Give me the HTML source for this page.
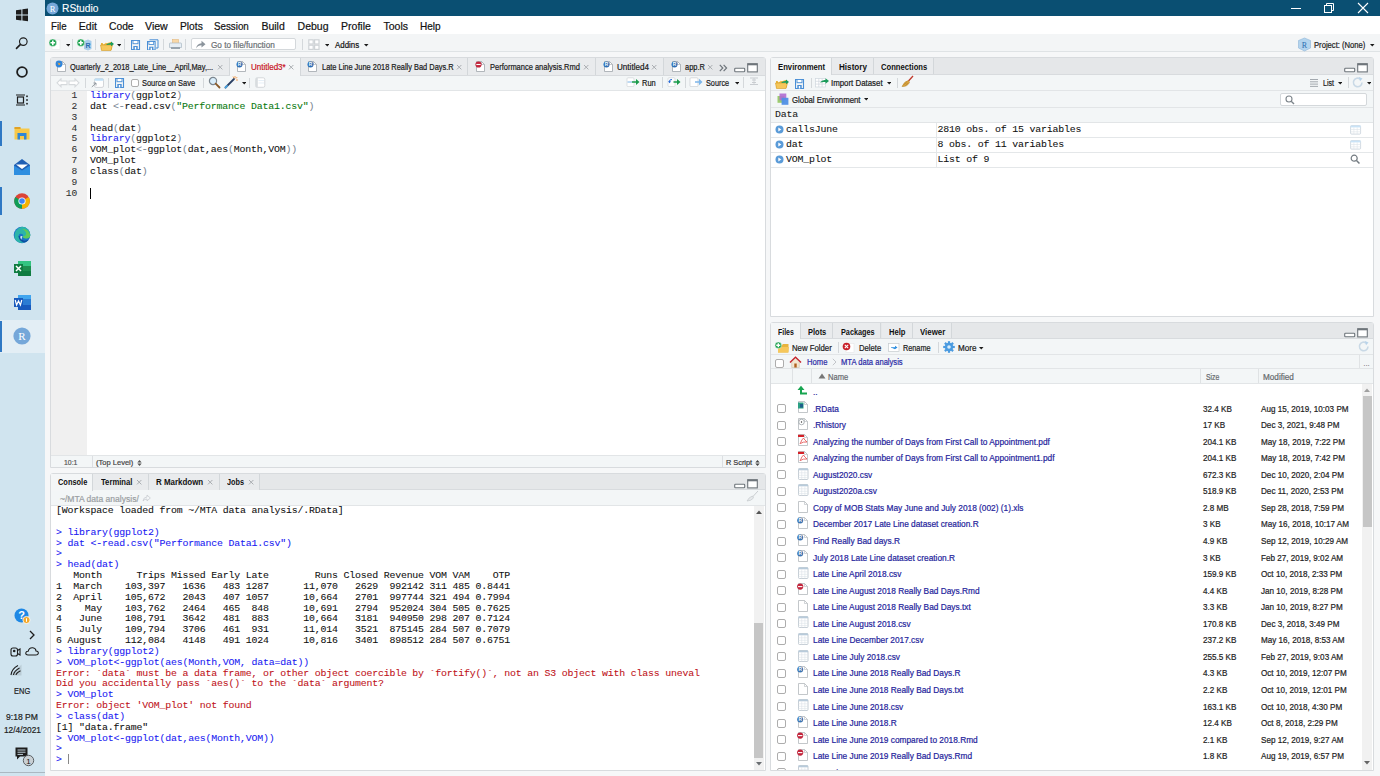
<!DOCTYPE html><html><head><meta charset="utf-8"><style>
html,body{margin:0;padding:0;width:1380px;height:776px;overflow:hidden;background:#f6f7f8;}
body>div,body>svg{position:absolute;}
body{font-family:"Liberation Sans",sans-serif;}
</style></head><body>
<div style="left:44px;top:0px;width:1336px;height:776px;background:#f6f7f8;"></div>
<div style="left:44px;top:0px;width:1336px;height:16px;background:#0a4f72;"></div>
<div style="left:44px;top:16px;width:1336px;height:18px;background:#ffffff;"></div>
<div style="left:44px;top:34px;width:1336px;height:17px;background:#f3f5f6;"></div>
<div style="left:44px;top:51px;width:1336px;height:1px;background:#dfe3e5;"></div>
<div style="left:0px;top:0px;width:45px;height:776px;background:#d0e4ef;"></div>
<div style="left:0px;top:320px;width:45px;height:33px;background:#e3eef5;"></div>
<div style="left:0px;top:772px;width:45px;height:1px;background:#aab8c2;"></div>
<div style="left:50px;top:57px;width:716px;height:411px;background:#ffffff;border:1px solid #d8dbde;box-sizing:border-box;border-radius:3px 3px 0 0;"></div>
<div style="left:51px;top:58px;width:714px;height:17px;background:#e5e7e9;"></div>
<div style="left:51px;top:75px;width:714px;height:1px;background:#d8dbde;"></div>
<div style="left:51px;top:76px;width:714px;height:14px;background:#f3f6f7;"></div>
<div style="left:51px;top:90px;width:714px;height:1px;background:#e2e5e7;"></div>
<div style="left:51px;top:91px;width:36px;height:364px;background:#f0f0f0;"></div>
<div style="left:51px;top:455px;width:714px;height:1px;background:#e2e5e7;"></div>
<div style="left:51px;top:456px;width:714px;height:11px;background:#f3f6f7;"></div>
<div style="left:50px;top:473px;width:716px;height:298px;background:#ffffff;border:1px solid #d8dbde;box-sizing:border-box;border-radius:3px 3px 0 0;"></div>
<div style="left:51px;top:474px;width:714px;height:16px;background:#e5e7e9;"></div>
<div style="left:51px;top:489px;width:714px;height:1px;background:#d8dbde;"></div>
<div style="left:51px;top:490px;width:714px;height:15px;background:#f3f6f7;"></div>
<div style="left:51px;top:505px;width:714px;height:1px;background:#e2e5e7;"></div>
<div style="left:770px;top:57px;width:604px;height:260px;background:#ffffff;border:1px solid #d8dbde;box-sizing:border-box;border-radius:3px 3px 0 0;"></div>
<div style="left:771px;top:58px;width:602px;height:16px;background:#e5e7e9;"></div>
<div style="left:771px;top:74px;width:602px;height:1px;background:#d8dbde;"></div>
<div style="left:771px;top:75px;width:602px;height:15px;background:#f3f6f7;"></div>
<div style="left:771px;top:90px;width:602px;height:1px;background:#e2e5e7;"></div>
<div style="left:771px;top:91px;width:602px;height:16px;background:#f3f6f7;"></div>
<div style="left:771px;top:107px;width:602px;height:1px;background:#e2e5e7;"></div>
<div style="left:771px;top:108px;width:602px;height:14px;background:#f3f6f7;"></div>
<div style="left:771px;top:122px;width:602px;height:1px;background:#e2e5e7;"></div>
<div style="left:770px;top:322px;width:604px;height:449px;background:#ffffff;border:1px solid #d8dbde;box-sizing:border-box;border-radius:3px 3px 0 0;"></div>
<div style="left:771px;top:323px;width:602px;height:15px;background:#e5e7e9;"></div>
<div style="left:771px;top:338px;width:602px;height:1px;background:#d8dbde;"></div>
<div style="left:771px;top:339px;width:602px;height:15px;background:#f3f6f7;"></div>
<div style="left:771px;top:354px;width:602px;height:1px;background:#e2e5e7;"></div>
<div style="left:771px;top:355px;width:602px;height:13px;background:#f3f6f7;"></div>
<div style="left:771px;top:368px;width:602px;height:1px;background:#e2e5e7;"></div>
<div style="left:771px;top:369px;width:602px;height:14px;background:#f3f6f7;"></div>
<div style="left:771px;top:383px;width:602px;height:1px;background:#e2e5e7;"></div>
<div style="left:61.80px;top:-1.00px;line-height:20px;font-size:10.2px;color:#ffffff;font-family:'Liberation Sans',sans-serif;white-space:pre;transform-origin:0 0;transform:scaleX(1.0057);-webkit-text-stroke:0.1px #ffffff;">RStudio</div>
<div style="left:50.90px;top:16.00px;line-height:20px;font-size:10.5px;color:#111111;font-family:'Liberation Sans',sans-serif;white-space:pre;transform-origin:0 0;transform:scaleX(0.9222);-webkit-text-stroke:0.2px #111111;">File</div>
<div style="left:78.80px;top:16.00px;line-height:20px;font-size:10.5px;color:#111111;font-family:'Liberation Sans',sans-serif;white-space:pre;transform-origin:0 0;-webkit-text-stroke:0.2px #111111;">Edit</div>
<div style="left:108.50px;top:16.00px;line-height:20px;font-size:10.5px;color:#111111;font-family:'Liberation Sans',sans-serif;white-space:pre;transform-origin:0 0;transform:scaleX(0.9799);-webkit-text-stroke:0.2px #111111;">Code</div>
<div style="left:145.10px;top:16.00px;line-height:20px;font-size:10.5px;color:#111111;font-family:'Liberation Sans',sans-serif;white-space:pre;transform-origin:0 0;transform:scaleX(1.0090);-webkit-text-stroke:0.2px #111111;">View</div>
<div style="left:179.90px;top:16.00px;line-height:20px;font-size:10.5px;color:#111111;font-family:'Liberation Sans',sans-serif;white-space:pre;transform-origin:0 0;transform:scaleX(0.9768);-webkit-text-stroke:0.2px #111111;">Plots</div>
<div style="left:214.40px;top:16.00px;line-height:20px;font-size:10.5px;color:#111111;font-family:'Liberation Sans',sans-serif;white-space:pre;transform-origin:0 0;transform:scaleX(0.9315);-webkit-text-stroke:0.2px #111111;">Session</div>
<div style="left:261.40px;top:16.00px;line-height:20px;font-size:10.5px;color:#111111;font-family:'Liberation Sans',sans-serif;white-space:pre;transform-origin:0 0;-webkit-text-stroke:0.2px #111111;">Build</div>
<div style="left:297.60px;top:16.00px;line-height:20px;font-size:10.5px;color:#111111;font-family:'Liberation Sans',sans-serif;white-space:pre;transform-origin:0 0;-webkit-text-stroke:0.2px #111111;">Debug</div>
<div style="left:341.10px;top:16.00px;line-height:20px;font-size:10.5px;color:#111111;font-family:'Liberation Sans',sans-serif;white-space:pre;transform-origin:0 0;-webkit-text-stroke:0.2px #111111;">Profile</div>
<div style="left:383.50px;top:16.00px;line-height:20px;font-size:10.5px;color:#111111;font-family:'Liberation Sans',sans-serif;white-space:pre;transform-origin:0 0;-webkit-text-stroke:0.2px #111111;">Tools</div>
<div style="left:419.90px;top:16.00px;line-height:20px;font-size:10.5px;color:#111111;font-family:'Liberation Sans',sans-serif;white-space:pre;transform-origin:0 0;transform:scaleX(0.9538);-webkit-text-stroke:0.2px #111111;">Help</div>
<div style="left:190.5px;top:38.3px;width:105px;height:12px;background:#ffffff;border:1px solid #d4d8db;box-sizing:border-box;border-radius:2px;"></div>
<div style="left:211.30px;top:35.00px;line-height:20px;font-size:8.3px;color:#6a6f73;font-family:'Liberation Sans',sans-serif;white-space:pre;transform-origin:0 0;transform:scaleX(0.9878);-webkit-text-stroke:0.2px #6a6f73;">Go to file/function</div>
<div style="left:335.00px;top:35.00px;line-height:20px;font-size:8.3px;color:#111;font-family:'Liberation Sans',sans-serif;white-space:pre;transform-origin:0 0;transform:scaleX(0.9495);-webkit-text-stroke:0.2px #111;">Addins</div>
<div style="left:1314.30px;top:35.00px;line-height:20px;font-size:8.3px;color:#222;font-family:'Liberation Sans',sans-serif;white-space:pre;transform-origin:0 0;transform:scaleX(0.9209);-webkit-text-stroke:0.2px #222;">Project: (None)</div>
<div style="left:51px;top:58px;width:178.5px;height:17px;background:#e9ebed;border-right:1px solid #d3d7da;box-sizing:border-box;"></div>
<div style="left:229.5px;top:58px;width:71.5px;height:18px;background:#f4f6f7;border-right:1px solid #d3d7da;box-sizing:border-box;"></div>
<div style="left:301px;top:58px;width:167.2px;height:17px;background:#e9ebed;border-right:1px solid #d3d7da;box-sizing:border-box;"></div>
<div style="left:468.2px;top:58px;width:127.80000000000001px;height:17px;background:#e9ebed;border-right:1px solid #d3d7da;box-sizing:border-box;"></div>
<div style="left:596px;top:58px;width:68.29999999999995px;height:17px;background:#e9ebed;border-right:1px solid #d3d7da;box-sizing:border-box;"></div>
<div style="left:70.30px;top:57.00px;line-height:20px;font-size:8.3px;color:#1a1a1a;font-family:'Liberation Sans',sans-serif;white-space:pre;transform-origin:0 0;transform:scaleX(0.8952);-webkit-text-stroke:0.2px #1a1a1a;">Quarterly_2_2018_Late_Line__April,May,...</div>
<svg style="position:absolute;left:216.60000000000002px;top:63.599999999999994px;" width="6.4" height="6.4" viewBox="0 0 6.4 6.4"><path d="M1 1 L5.4 5.4 M5.4 1 L1 5.4" stroke="#a9adb1" stroke-width="1.0"/></svg>
<div style="left:250.50px;top:57.00px;line-height:20px;font-size:8.3px;color:#c8141e;font-family:'Liberation Sans',sans-serif;white-space:pre;transform-origin:0 0;transform:scaleX(0.9642);-webkit-text-stroke:0.2px #c8141e;">Untitled3*</div>
<svg style="position:absolute;left:288.1px;top:63.599999999999994px;" width="6.4" height="6.4" viewBox="0 0 6.4 6.4"><path d="M1 1 L5.4 5.4 M5.4 1 L1 5.4" stroke="#a9adb1" stroke-width="1.0"/></svg>
<div style="left:321.50px;top:57.00px;line-height:20px;font-size:8.3px;color:#1a1a1a;font-family:'Liberation Sans',sans-serif;white-space:pre;transform-origin:0 0;transform:scaleX(0.8948);-webkit-text-stroke:0.2px #1a1a1a;">Late Line June 2018 Really Bad Days.R</div>
<svg style="position:absolute;left:455.7px;top:63.599999999999994px;" width="6.4" height="6.4" viewBox="0 0 6.4 6.4"><path d="M1 1 L5.4 5.4 M5.4 1 L1 5.4" stroke="#a9adb1" stroke-width="1.0"/></svg>
<div style="left:489.80px;top:57.00px;line-height:20px;font-size:8.3px;color:#1a1a1a;font-family:'Liberation Sans',sans-serif;white-space:pre;transform-origin:0 0;transform:scaleX(0.9023);-webkit-text-stroke:0.2px #1a1a1a;">Performance analysis.Rmd</div>
<svg style="position:absolute;left:583.0px;top:63.599999999999994px;" width="6.4" height="6.4" viewBox="0 0 6.4 6.4"><path d="M1 1 L5.4 5.4 M5.4 1 L1 5.4" stroke="#a9adb1" stroke-width="1.0"/></svg>
<div style="left:616.70px;top:57.00px;line-height:20px;font-size:8.3px;color:#1a1a1a;font-family:'Liberation Sans',sans-serif;white-space:pre;transform-origin:0 0;transform:scaleX(0.9768);-webkit-text-stroke:0.2px #1a1a1a;">Untitled4</div>
<svg style="position:absolute;left:650.9px;top:63.599999999999994px;" width="6.4" height="6.4" viewBox="0 0 6.4 6.4"><path d="M1 1 L5.4 5.4 M5.4 1 L1 5.4" stroke="#a9adb1" stroke-width="1.0"/></svg>
<div style="left:684.90px;top:57.00px;line-height:20px;font-size:8.3px;color:#1a1a1a;font-family:'Liberation Sans',sans-serif;white-space:pre;transform-origin:0 0;transform:scaleX(0.8941);-webkit-text-stroke:0.2px #1a1a1a;">app.R</div>
<svg style="position:absolute;left:707.4px;top:63.599999999999994px;" width="6.4" height="6.4" viewBox="0 0 6.4 6.4"><path d="M1 1 L5.4 5.4 M5.4 1 L1 5.4" stroke="#a9adb1" stroke-width="1.0"/></svg>
<div style="left:51px;top:474px;width:42.3px;height:17px;background:#f4f6f7;border-right:1px solid #d3d7da;box-sizing:border-box;"></div>
<div style="left:93.3px;top:474px;width:55.8px;height:15.5px;background:#e9ebed;border-right:1px solid #d3d7da;box-sizing:border-box;"></div>
<div style="left:149.1px;top:474px;width:71.30000000000001px;height:15.5px;background:#e9ebed;border-right:1px solid #d3d7da;box-sizing:border-box;"></div>
<div style="left:220.4px;top:474px;width:39.99999999999997px;height:15.5px;background:#e9ebed;border-right:1px solid #d3d7da;box-sizing:border-box;"></div>
<div style="left:57.80px;top:473.00px;line-height:20px;font-size:8.2px;color:#111;font-family:'Liberation Sans',sans-serif;white-space:pre;transform-origin:0 0;transform:scaleX(0.9057);font-weight:bold;">Console</div>
<div style="left:100.90px;top:473.00px;line-height:20px;font-size:8.2px;color:#111;font-family:'Liberation Sans',sans-serif;white-space:pre;transform-origin:0 0;transform:scaleX(0.9383);font-weight:bold;">Terminal</div>
<svg style="position:absolute;left:135.8px;top:479.1px;" width="6.4" height="6.4" viewBox="0 0 6.4 6.4"><path d="M1 1 L5.4 5.4 M5.4 1 L1 5.4" stroke="#a9adb1" stroke-width="1.0"/></svg>
<div style="left:155.70px;top:473.00px;line-height:20px;font-size:8.2px;color:#111;font-family:'Liberation Sans',sans-serif;white-space:pre;transform-origin:0 0;transform:scaleX(0.9703);font-weight:bold;">R Markdown</div>
<svg style="position:absolute;left:206.8px;top:479.1px;" width="6.4" height="6.4" viewBox="0 0 6.4 6.4"><path d="M1 1 L5.4 5.4 M5.4 1 L1 5.4" stroke="#a9adb1" stroke-width="1.0"/></svg>
<div style="left:227.00px;top:473.00px;line-height:20px;font-size:8.2px;color:#111;font-family:'Liberation Sans',sans-serif;white-space:pre;transform-origin:0 0;transform:scaleX(0.8882);font-weight:bold;">Jobs</div>
<svg style="position:absolute;left:247.5px;top:479.1px;" width="6.4" height="6.4" viewBox="0 0 6.4 6.4"><path d="M1 1 L5.4 5.4 M5.4 1 L1 5.4" stroke="#a9adb1" stroke-width="1.0"/></svg>
<div style="left:771px;top:58px;width:61px;height:17px;background:#f4f6f7;border-right:1px solid #d3d7da;box-sizing:border-box;"></div>
<div style="left:832px;top:58px;width:41.799999999999955px;height:16px;background:#e9ebed;border-right:1px solid #d3d7da;box-sizing:border-box;"></div>
<div style="left:873.8px;top:58px;width:60.200000000000045px;height:16px;background:#e9ebed;border-right:1px solid #d3d7da;box-sizing:border-box;"></div>
<div style="left:778.10px;top:58.00px;line-height:20px;font-size:8.2px;color:#111;font-family:'Liberation Sans',sans-serif;white-space:pre;transform-origin:0 0;transform:scaleX(0.9418);font-weight:bold;">Environment</div>
<div style="left:839.00px;top:58.00px;line-height:20px;font-size:8.2px;color:#111;font-family:'Liberation Sans',sans-serif;white-space:pre;transform-origin:0 0;transform:scaleX(0.9912);font-weight:bold;">History</div>
<div style="left:880.70px;top:58.00px;line-height:20px;font-size:8.2px;color:#111;font-family:'Liberation Sans',sans-serif;white-space:pre;transform-origin:0 0;transform:scaleX(0.9324);font-weight:bold;">Connections</div>
<div style="left:771px;top:323px;width:30px;height:16px;background:#f4f6f7;border-right:1px solid #d3d7da;box-sizing:border-box;"></div>
<div style="left:801px;top:323px;width:32.299999999999955px;height:15px;background:#e9ebed;border-right:1px solid #d3d7da;box-sizing:border-box;"></div>
<div style="left:833.3px;top:323px;width:48.200000000000045px;height:15px;background:#e9ebed;border-right:1px solid #d3d7da;box-sizing:border-box;"></div>
<div style="left:881.5px;top:323px;width:31.700000000000045px;height:15px;background:#e9ebed;border-right:1px solid #d3d7da;box-sizing:border-box;"></div>
<div style="left:913.2px;top:323px;width:38.5px;height:15px;background:#e9ebed;border-right:1px solid #d3d7da;box-sizing:border-box;"></div>
<div style="left:778.20px;top:323.00px;line-height:20px;font-size:8.2px;color:#111;font-family:'Liberation Sans',sans-serif;white-space:pre;transform-origin:0 0;transform:scaleX(0.8455);font-weight:bold;">Files</div>
<div style="left:808.10px;top:323.00px;line-height:20px;font-size:8.2px;color:#111;font-family:'Liberation Sans',sans-serif;white-space:pre;transform-origin:0 0;transform:scaleX(0.9128);font-weight:bold;">Plots</div>
<div style="left:840.60px;top:323.00px;line-height:20px;font-size:8.2px;color:#111;font-family:'Liberation Sans',sans-serif;white-space:pre;transform-origin:0 0;transform:scaleX(0.8879);font-weight:bold;">Packages</div>
<div style="left:888.80px;top:323.00px;line-height:20px;font-size:8.2px;color:#111;font-family:'Liberation Sans',sans-serif;white-space:pre;transform-origin:0 0;transform:scaleX(0.9286);font-weight:bold;">Help</div>
<div style="left:920.00px;top:323.00px;line-height:20px;font-size:8.2px;color:#111;font-family:'Liberation Sans',sans-serif;white-space:pre;transform-origin:0 0;transform:scaleX(0.9624);font-weight:bold;">Viewer</div>
<div style="left:141.90px;top:73.00px;line-height:20px;font-size:8.3px;color:#1a1a1a;font-family:'Liberation Sans',sans-serif;white-space:pre;transform-origin:0 0;transform:scaleX(0.8990);-webkit-text-stroke:0.2px #1a1a1a;">Source on Save</div>
<div style="left:642.10px;top:73.00px;line-height:20px;font-size:8.3px;color:#1a1a1a;font-family:'Liberation Sans',sans-serif;white-space:pre;transform-origin:0 0;transform:scaleX(0.9000);-webkit-text-stroke:0.2px #1a1a1a;">Run</div>
<div style="left:705.80px;top:73.00px;line-height:20px;font-size:8.3px;color:#1a1a1a;font-family:'Liberation Sans',sans-serif;white-space:pre;transform-origin:0 0;transform:scaleX(0.8785);-webkit-text-stroke:0.2px #1a1a1a;">Source</div>
<div style="left:64.00px;top:453.00px;line-height:20px;font-size:7.8px;color:#555;font-family:'Liberation Sans',sans-serif;white-space:pre;transform-origin:0 0;transform:scaleX(0.8828);-webkit-text-stroke:0.2px #555;">10:1</div>
<div style="left:91.5px;top:456px;width:1px;height:11px;background:#dcdfe2;"></div>
<div style="left:95.50px;top:453.00px;line-height:20px;font-size:7.8px;color:#444;font-family:'Liberation Sans',sans-serif;white-space:pre;transform-origin:0 0;transform:scaleX(0.9667);-webkit-text-stroke:0.2px #444;">(Top Level)</div>
<div style="left:721.5px;top:456px;width:1px;height:11px;background:#dcdfe2;"></div>
<div style="left:725.80px;top:453.00px;line-height:20px;font-size:7.8px;color:#333;font-family:'Liberation Sans',sans-serif;white-space:pre;transform-origin:0 0;transform:scaleX(0.9410);-webkit-text-stroke:0.2px #333;">R Script</div>
<svg style="position:absolute;left:136.5px;top:459.7px;" width="5" height="6" viewBox="0 0 5 6"><path d="M0.3 2.4 L2.5 0 L4.7 2.4Z M0.3 3.6 L2.5 6 L4.7 3.6Z" fill="#555"/></svg>
<svg style="position:absolute;left:755.4px;top:459.7px;" width="5" height="6" viewBox="0 0 5 6"><path d="M0.3 2.4 L2.5 0 L4.7 2.4Z M0.3 3.6 L2.5 6 L4.7 3.6Z" fill="#444"/></svg>
<div style="top:90.00px;line-height:12px;font-size:9.6px;color:#333;font-family:'Liberation Mono',monospace;white-space:pre;letter-spacing:0.002px;-webkit-text-stroke:0.08px #333;right:1302.7px;">1</div>
<div style="left:90px;top:90.00px;line-height:12px;font-size:9.9px;letter-spacing:-0.178px;-webkit-text-stroke:0.08px currentColor;font-family:'Liberation Mono',monospace;white-space:pre;"><span style="color:#1f1ff0">library</span><span style="color:#7a8693">(</span><span style="color:#111">ggplot2</span><span style="color:#7a8693">)</span></div>
<div style="top:100.84px;line-height:12px;font-size:9.6px;color:#333;font-family:'Liberation Mono',monospace;white-space:pre;letter-spacing:0.002px;-webkit-text-stroke:0.08px #333;right:1302.7px;">2</div>
<div style="left:90px;top:100.84px;line-height:12px;font-size:9.9px;letter-spacing:-0.178px;-webkit-text-stroke:0.08px currentColor;font-family:'Liberation Mono',monospace;white-space:pre;"><span style="color:#111">dat </span><span style="color:#7a8693">&lt;-</span><span style="color:#111">read.csv</span><span style="color:#7a8693">(</span><span style="color:#0a7a10">"Performance Data1.csv"</span><span style="color:#7a8693">)</span></div>
<div style="top:111.68px;line-height:12px;font-size:9.6px;color:#333;font-family:'Liberation Mono',monospace;white-space:pre;letter-spacing:0.002px;-webkit-text-stroke:0.08px #333;right:1302.7px;">3</div>
<div style="top:122.52px;line-height:12px;font-size:9.6px;color:#333;font-family:'Liberation Mono',monospace;white-space:pre;letter-spacing:0.002px;-webkit-text-stroke:0.08px #333;right:1302.7px;">4</div>
<div style="left:90px;top:122.52px;line-height:12px;font-size:9.9px;letter-spacing:-0.178px;-webkit-text-stroke:0.08px currentColor;font-family:'Liberation Mono',monospace;white-space:pre;"><span style="color:#111">head</span><span style="color:#7a8693">(</span><span style="color:#111">dat</span><span style="color:#7a8693">)</span></div>
<div style="top:133.36px;line-height:12px;font-size:9.6px;color:#333;font-family:'Liberation Mono',monospace;white-space:pre;letter-spacing:0.002px;-webkit-text-stroke:0.08px #333;right:1302.7px;">5</div>
<div style="left:90px;top:133.36px;line-height:12px;font-size:9.9px;letter-spacing:-0.178px;-webkit-text-stroke:0.08px currentColor;font-family:'Liberation Mono',monospace;white-space:pre;"><span style="color:#1f1ff0">library</span><span style="color:#7a8693">(</span><span style="color:#111">ggplot2</span><span style="color:#7a8693">)</span></div>
<div style="top:144.20px;line-height:12px;font-size:9.6px;color:#333;font-family:'Liberation Mono',monospace;white-space:pre;letter-spacing:0.002px;-webkit-text-stroke:0.08px #333;right:1302.7px;">6</div>
<div style="left:90px;top:144.20px;line-height:12px;font-size:9.9px;letter-spacing:-0.178px;-webkit-text-stroke:0.08px currentColor;font-family:'Liberation Mono',monospace;white-space:pre;"><span style="color:#111">VOM_plot</span><span style="color:#7a8693">&lt;-</span><span style="color:#111">ggplot</span><span style="color:#7a8693">(</span><span style="color:#111">dat,aes</span><span style="color:#7a8693">(</span><span style="color:#111">Month,VOM</span><span style="color:#7a8693">))</span></div>
<div style="top:155.04px;line-height:12px;font-size:9.6px;color:#333;font-family:'Liberation Mono',monospace;white-space:pre;letter-spacing:0.002px;-webkit-text-stroke:0.08px #333;right:1302.7px;">7</div>
<div style="left:90px;top:155.04px;line-height:12px;font-size:9.9px;letter-spacing:-0.178px;-webkit-text-stroke:0.08px currentColor;font-family:'Liberation Mono',monospace;white-space:pre;"><span style="color:#111">VOM_plot</span></div>
<div style="top:165.88px;line-height:12px;font-size:9.6px;color:#333;font-family:'Liberation Mono',monospace;white-space:pre;letter-spacing:0.002px;-webkit-text-stroke:0.08px #333;right:1302.7px;">8</div>
<div style="left:90px;top:165.88px;line-height:12px;font-size:9.9px;letter-spacing:-0.178px;-webkit-text-stroke:0.08px currentColor;font-family:'Liberation Mono',monospace;white-space:pre;"><span style="color:#111">class</span><span style="color:#7a8693">(</span><span style="color:#111">dat</span><span style="color:#7a8693">)</span></div>
<div style="top:176.72px;line-height:12px;font-size:9.6px;color:#333;font-family:'Liberation Mono',monospace;white-space:pre;letter-spacing:0.002px;-webkit-text-stroke:0.08px #333;right:1302.7px;">9</div>
<div style="top:187.56px;line-height:12px;font-size:9.6px;color:#333;font-family:'Liberation Mono',monospace;white-space:pre;letter-spacing:0.002px;-webkit-text-stroke:0.08px #333;right:1302.7px;">10</div>
<div style="left:90px;top:188px;width:1px;height:11px;background:#000;"></div>
<div style="left:60.00px;top:489.00px;line-height:20px;font-size:8.4px;color:#9a9ea2;font-family:'Liberation Sans',sans-serif;white-space:pre;transform-origin:0 0;transform:scaleX(1.0183);-webkit-text-stroke:0.2px #9a9ea2;">~/MTA data analysis/</div>
<div style="top:505.00px;line-height:12px;font-size:9.9px;color:#111;font-family:'Liberation Mono',monospace;white-space:pre;letter-spacing:-0.178px;-webkit-text-stroke:0.08px #111;left:56px;">[Workspace loaded from ~/MTA data analysis/.RData]</div>
<div style="top:526.68px;line-height:12px;font-size:9.9px;color:#1a1af2;font-family:'Liberation Mono',monospace;white-space:pre;letter-spacing:-0.178px;-webkit-text-stroke:0.08px #1a1af2;left:56px;">&gt; library(ggplot2)</div>
<div style="top:537.52px;line-height:12px;font-size:9.9px;color:#1a1af2;font-family:'Liberation Mono',monospace;white-space:pre;letter-spacing:-0.178px;-webkit-text-stroke:0.08px #1a1af2;left:56px;">&gt; dat &lt;-read.csv("Performance Data1.csv")</div>
<div style="top:548.36px;line-height:12px;font-size:9.9px;color:#1a1af2;font-family:'Liberation Mono',monospace;white-space:pre;letter-spacing:-0.178px;-webkit-text-stroke:0.08px #1a1af2;left:56px;">&gt; </div>
<div style="top:559.20px;line-height:12px;font-size:9.9px;color:#1a1af2;font-family:'Liberation Mono',monospace;white-space:pre;letter-spacing:-0.178px;-webkit-text-stroke:0.08px #1a1af2;left:56px;">&gt; head(dat)</div>
<div style="top:570.04px;line-height:12px;font-size:9.9px;color:#111;font-family:'Liberation Mono',monospace;white-space:pre;letter-spacing:-0.178px;-webkit-text-stroke:0.08px #111;left:56px;">   Month      Trips Missed Early Late        Runs Closed Revenue VOM VAM    OTP</div>
<div style="top:580.88px;line-height:12px;font-size:9.9px;color:#111;font-family:'Liberation Mono',monospace;white-space:pre;letter-spacing:-0.178px;-webkit-text-stroke:0.08px #111;left:56px;">1  March    103,397   1636   483 1287      11,070   2629  992142 311 485 0.8441</div>
<div style="top:591.72px;line-height:12px;font-size:9.9px;color:#111;font-family:'Liberation Mono',monospace;white-space:pre;letter-spacing:-0.178px;-webkit-text-stroke:0.08px #111;left:56px;">2  April    105,672   2043   407 1057      10,664   2701  997744 321 494 0.7994</div>
<div style="top:602.56px;line-height:12px;font-size:9.9px;color:#111;font-family:'Liberation Mono',monospace;white-space:pre;letter-spacing:-0.178px;-webkit-text-stroke:0.08px #111;left:56px;">3    May    103,762   2464   465  848      10,691   2794  952024 304 505 0.7625</div>
<div style="top:613.40px;line-height:12px;font-size:9.9px;color:#111;font-family:'Liberation Mono',monospace;white-space:pre;letter-spacing:-0.178px;-webkit-text-stroke:0.08px #111;left:56px;">4   June    108,791   3642   481  883      10,664   3181  940950 298 207 0.7124</div>
<div style="top:624.24px;line-height:12px;font-size:9.9px;color:#111;font-family:'Liberation Mono',monospace;white-space:pre;letter-spacing:-0.178px;-webkit-text-stroke:0.08px #111;left:56px;">5   July    109,794   3706   461  931      11,014   3521  875145 284 507 0.7079</div>
<div style="top:635.08px;line-height:12px;font-size:9.9px;color:#111;font-family:'Liberation Mono',monospace;white-space:pre;letter-spacing:-0.178px;-webkit-text-stroke:0.08px #111;left:56px;">6 August    112,084   4148   491 1024      10,816   3401  898512 284 507 0.6751</div>
<div style="top:645.92px;line-height:12px;font-size:9.9px;color:#1a1af2;font-family:'Liberation Mono',monospace;white-space:pre;letter-spacing:-0.178px;-webkit-text-stroke:0.08px #1a1af2;left:56px;">&gt; library(ggplot2)</div>
<div style="top:656.76px;line-height:12px;font-size:9.9px;color:#1a1af2;font-family:'Liberation Mono',monospace;white-space:pre;letter-spacing:-0.178px;-webkit-text-stroke:0.08px #1a1af2;left:56px;">&gt; VOM_plot&lt;-ggplot(aes(Month,VOM, data=dat))</div>
<div style="top:667.60px;line-height:12px;font-size:9.9px;color:#c0131b;font-family:'Liberation Mono',monospace;white-space:pre;letter-spacing:-0.178px;-webkit-text-stroke:0.08px #c0131b;left:56px;">Error: `data` must be a data frame, or other object coercible by `fortify()`, not an S3 object with class uneval</div>
<div style="top:678.44px;line-height:12px;font-size:9.9px;color:#c0131b;font-family:'Liberation Mono',monospace;white-space:pre;letter-spacing:-0.178px;-webkit-text-stroke:0.08px #c0131b;left:56px;">Did you accidentally pass `aes()` to the `data` argument?</div>
<div style="top:689.28px;line-height:12px;font-size:9.9px;color:#1a1af2;font-family:'Liberation Mono',monospace;white-space:pre;letter-spacing:-0.178px;-webkit-text-stroke:0.08px #1a1af2;left:56px;">&gt; VOM_plot</div>
<div style="top:700.12px;line-height:12px;font-size:9.9px;color:#c0131b;font-family:'Liberation Mono',monospace;white-space:pre;letter-spacing:-0.178px;-webkit-text-stroke:0.08px #c0131b;left:56px;">Error: object 'VOM_plot' not found</div>
<div style="top:710.96px;line-height:12px;font-size:9.9px;color:#1a1af2;font-family:'Liberation Mono',monospace;white-space:pre;letter-spacing:-0.178px;-webkit-text-stroke:0.08px #1a1af2;left:56px;">&gt; class(dat)</div>
<div style="top:721.80px;line-height:12px;font-size:9.9px;color:#111;font-family:'Liberation Mono',monospace;white-space:pre;letter-spacing:-0.178px;-webkit-text-stroke:0.08px #111;left:56px;">[1] "data.frame"</div>
<div style="top:732.64px;line-height:12px;font-size:9.9px;color:#1a1af2;font-family:'Liberation Mono',monospace;white-space:pre;letter-spacing:-0.178px;-webkit-text-stroke:0.08px #1a1af2;left:56px;">&gt; VOM_plot&lt;-ggplot(dat,aes(Month,VOM))</div>
<div style="top:743.48px;line-height:12px;font-size:9.9px;color:#1a1af2;font-family:'Liberation Mono',monospace;white-space:pre;letter-spacing:-0.178px;-webkit-text-stroke:0.08px #1a1af2;left:56px;">&gt; </div>
<div style="top:754.32px;line-height:12px;font-size:9.9px;color:#1a1af2;font-family:'Liberation Mono',monospace;white-space:pre;letter-spacing:-0.178px;-webkit-text-stroke:0.08px #1a1af2;left:56px;">&gt; </div>
<div style="left:68px;top:754px;width:1px;height:10px;background:#888;"></div>
<div style="left:831.40px;top:73.00px;line-height:20px;font-size:8.3px;color:#1a1a1a;font-family:'Liberation Sans',sans-serif;white-space:pre;transform-origin:0 0;transform:scaleX(0.9480);-webkit-text-stroke:0.2px #1a1a1a;">Import Dataset</div>
<div style="left:791.70px;top:90.00px;line-height:20px;font-size:8.3px;color:#1a1a1a;font-family:'Liberation Sans',sans-serif;white-space:pre;transform-origin:0 0;transform:scaleX(0.9398);-webkit-text-stroke:0.2px #1a1a1a;">Global Environment</div>
<div style="left:1323.20px;top:73.00px;line-height:20px;font-size:8.3px;color:#1a1a1a;font-family:'Liberation Sans',sans-serif;white-space:pre;transform-origin:0 0;transform:scaleX(0.8517);-webkit-text-stroke:0.2px #1a1a1a;">List</div>
<div style="left:1280px;top:93.2px;width:87.3px;height:12.6px;background:#ffffff;border:1px solid #d4d8db;box-sizing:border-box;border-radius:2px;"></div>
<div style="top:108.50px;line-height:12px;font-size:9.9px;color:#222;font-family:'Liberation Mono',monospace;white-space:pre;letter-spacing:-0.178px;-webkit-text-stroke:0.08px #222;left:775px;">Data</div>
<div style="top:123.80px;line-height:12px;font-size:9.9px;color:#111;font-family:'Liberation Mono',monospace;white-space:pre;letter-spacing:-0.178px;-webkit-text-stroke:0.08px #111;left:786px;">callsJune</div>
<div style="top:123.80px;line-height:12px;font-size:9.9px;color:#111;font-family:'Liberation Mono',monospace;white-space:pre;letter-spacing:-0.178px;-webkit-text-stroke:0.08px #111;left:937.5px;">2810 obs. of 15 variables</div>
<div style="left:771px;top:137.45px;width:602px;height:1px;background:#e4e7e9;"></div>
<div style="top:138.75px;line-height:12px;font-size:9.9px;color:#111;font-family:'Liberation Mono',monospace;white-space:pre;letter-spacing:-0.178px;-webkit-text-stroke:0.08px #111;left:786px;">dat</div>
<div style="top:138.75px;line-height:12px;font-size:9.9px;color:#111;font-family:'Liberation Mono',monospace;white-space:pre;letter-spacing:-0.178px;-webkit-text-stroke:0.08px #111;left:937.5px;">8 obs. of 11 variables</div>
<div style="left:771px;top:152.4px;width:602px;height:1px;background:#e4e7e9;"></div>
<div style="top:153.70px;line-height:12px;font-size:9.9px;color:#111;font-family:'Liberation Mono',monospace;white-space:pre;letter-spacing:-0.178px;-webkit-text-stroke:0.08px #111;left:786px;">VOM_plot</div>
<div style="top:153.70px;line-height:12px;font-size:9.9px;color:#111;font-family:'Liberation Mono',monospace;white-space:pre;letter-spacing:-0.178px;-webkit-text-stroke:0.08px #111;left:937.5px;">List of 9</div>
<div style="left:771px;top:167.35px;width:602px;height:1px;background:#e4e7e9;"></div>
<div style="left:936px;top:123px;width:1px;height:45px;background:#e4e7e9;"></div>
<div style="left:791.90px;top:338.00px;line-height:20px;font-size:8.3px;color:#1a1a1a;font-family:'Liberation Sans',sans-serif;white-space:pre;transform-origin:0 0;transform:scaleX(0.9378);-webkit-text-stroke:0.2px #1a1a1a;">New Folder</div>
<div style="left:858.60px;top:338.00px;line-height:20px;font-size:8.3px;color:#1a1a1a;font-family:'Liberation Sans',sans-serif;white-space:pre;transform-origin:0 0;transform:scaleX(0.9252);-webkit-text-stroke:0.2px #1a1a1a;">Delete</div>
<div style="left:903.30px;top:338.00px;line-height:20px;font-size:8.3px;color:#1a1a1a;font-family:'Liberation Sans',sans-serif;white-space:pre;transform-origin:0 0;transform:scaleX(0.8765);-webkit-text-stroke:0.2px #1a1a1a;">Rename</div>
<div style="left:958.30px;top:338.00px;line-height:20px;font-size:8.3px;color:#1a1a1a;font-family:'Liberation Sans',sans-serif;white-space:pre;transform-origin:0 0;transform:scaleX(0.9732);-webkit-text-stroke:0.2px #1a1a1a;">More</div>
<div style="left:806.90px;top:352.00px;line-height:20px;font-size:8.3px;color:#2b2ba6;font-family:'Liberation Sans',sans-serif;white-space:pre;transform-origin:0 0;transform:scaleX(0.9212);-webkit-text-stroke:0.2px #2b2ba6;">Home</div>
<svg style="position:absolute;left:831.5px;top:358px;" width="5" height="8" viewBox="0 0 5 8"><path d="M0.8 0.8 L4 4 L0.8 7.2" fill="none" stroke="#b5b9bd" stroke-width="0.8"/></svg>
<div style="left:840.80px;top:352.00px;line-height:20px;font-size:8.3px;color:#2b2ba6;font-family:'Liberation Sans',sans-serif;white-space:pre;transform-origin:0 0;transform:scaleX(0.9182);-webkit-text-stroke:0.2px #2b2ba6;">MTA data analysis</div>
<div style="left:828.40px;top:367.00px;line-height:20px;font-size:8.3px;color:#666a6e;font-family:'Liberation Sans',sans-serif;white-space:pre;transform-origin:0 0;transform:scaleX(0.9122);-webkit-text-stroke:0.2px #666a6e;">Name</div>
<div style="left:1205.80px;top:367.00px;line-height:20px;font-size:8.3px;color:#666a6e;font-family:'Liberation Sans',sans-serif;white-space:pre;transform-origin:0 0;transform:scaleX(0.8301);-webkit-text-stroke:0.2px #666a6e;">Size</div>
<div style="left:1263.10px;top:367.00px;line-height:20px;font-size:8.3px;color:#666a6e;font-family:'Liberation Sans',sans-serif;white-space:pre;transform-origin:0 0;transform:scaleX(0.9849);-webkit-text-stroke:0.2px #666a6e;">Modified</div>
<div style="left:0px;top:121px;width:2px;height:25px;background:#2f78c4;"></div>
<div style="left:0px;top:187px;width:2px;height:28px;background:#2f78c4;"></div>
<div style="left:0px;top:321px;width:2px;height:31px;background:#2f78c4;"></div>
<svg style="position:absolute;left:15px;top:7.5px;" width="14" height="14" viewBox="0 0 14 14"><g fill="#1d1d1d"><path d="M1 2.2 L6.4 1.5 V6.4 H1Z"/><path d="M7.4 1.35 L13 0.6 V6.4 H7.4Z"/><path d="M1 7.4 H6.4 V12.4 L1 11.7Z"/><path d="M7.4 7.4 H13 V13.3 L7.4 12.5Z"/></g></svg>
<svg style="position:absolute;left:15px;top:36px;" width="14" height="14" viewBox="0 0 14 14"><circle cx="8.3" cy="5.6" r="3.8" fill="none" stroke="#1d1d1d" stroke-width="1.15"/><path d="M5.5 8.4 L1.5 12.4" stroke="#1d1d1d" stroke-width="1.6" stroke-linecap="round"/></svg>
<svg style="position:absolute;left:15px;top:65px;" width="14" height="14" viewBox="0 0 14 14"><circle cx="7" cy="7" r="4.9" fill="none" stroke="#1d1d1d" stroke-width="1.8"/></svg>
<svg style="position:absolute;left:15px;top:93px;" width="14" height="14" viewBox="0 0 14 14"><g fill="none" stroke="#1d1d1d" stroke-width="1.2"><path d="M1 2 H10 M1 12 H10"/><rect x="2.5" y="4" width="6" height="6"/></g><g fill="#1d1d1d"><rect x="11.2" y="2.5" width="1.6" height="1.6"/><rect x="11.2" y="6.2" width="1.6" height="1.6"/><rect x="11.2" y="9.9" width="1.6" height="1.6"/></g></svg>
<svg style="position:absolute;left:14px;top:126px;" width="16" height="15" viewBox="0 0 16 15"><path d="M0.5 1.5 H6 L7 2.5 H15.5 V13.5 H0.5Z" fill="#f8c94a"/><rect x="0.5" y="1" width="6" height="2" fill="#e0a227"/><path d="M3.5 7 H12.5 V13.5 H10 V10 H6 V13.5 H3.5Z" fill="#2f86d6"/></svg>
<svg style="position:absolute;left:13px;top:158px;" width="18" height="18" viewBox="0 0 18 18"><path d="M1 7 L9 1 L17 7 V17 H1Z" fill="#1f5fb4"/><path d="M3 6.5 H15 L9 11Z" fill="#ffffff"/><path d="M1 7.5 L9 12.5 L17 7.5 V17 H1Z" fill="#2e8ee0"/></svg>
<svg style="position:absolute;left:14px;top:193px;" width="16" height="16" viewBox="0 0 16 16"><circle cx="8" cy="8" r="7.8" fill="#db4437"/><path d="M8 8 L1.25 4.1 A7.8 7.8 0 0 0 8 15.8 Z" fill="#0f9d58"/><path d="M8 8 L14.75 4.1 A7.8 7.8 0 0 1 8 15.8 Z" fill="#f4b400"/><circle cx="8" cy="8" r="3.6" fill="#fff"/><circle cx="8" cy="8" r="2.8" fill="#4285f4"/></svg>
<svg style="position:absolute;left:13px;top:226px;" width="18" height="18" viewBox="0 0 18 18"><circle cx="9" cy="9" r="8.3" fill="#1a73c8"/><path d="M9 0.7 A8.3 8.3 0 0 1 17.3 9 Q17 12.5 13 12.5 Q10 12.5 9.5 10.5 Q11 9 9 8 Q6 7 5.5 10 Q6 15 11 16.5 Q4 18 1.5 12 Q0.7 3 9 0.7Z" fill="#2cb4a9"/><path d="M17.3 9 Q17 12.5 13 12.5 Q10 12.5 9.5 10.5 Q12 11 13 8.5 Q13.5 5 9 3 Q15 2 17.3 9Z" fill="#5ec95a"/><path d="M5.5 10 Q6 15 11 16.5 Q14 16 16 13.5 Q12 15.5 9.5 14 Q7.2 12.5 7.8 10.5Z" fill="#0c4f9e"/><path d="M9.5 10.5 Q8 12.3 9 13.8 Q7 13 7.2 10.8 Q8 9.2 9.5 10.5Z" fill="#fff" opacity="0.85"/></svg>
<svg style="position:absolute;left:13px;top:260px;" width="19" height="17" viewBox="0 0 19 17"><rect x="5" y="1" width="13" height="15" fill="#1d8f4e"/><rect x="5" y="1" width="13" height="5" fill="#33c481"/><rect x="5" y="11" width="13" height="5" fill="#107c41"/><rect x="1" y="4" width="9" height="9" fill="#107c41"/><path d="M3 6 L8 11 M8 6 L3 11" stroke="#fff" stroke-width="1.5"/></svg>
<svg style="position:absolute;left:13px;top:294px;" width="19" height="17" viewBox="0 0 19 17"><rect x="5" y="1" width="13" height="15" fill="#2b7cd3"/><rect x="5" y="1" width="13" height="4" fill="#41a5ee"/><rect x="5" y="11" width="13" height="5" fill="#185abd"/><rect x="1" y="4" width="9" height="9" fill="#185abd"/><path d="M2.2 6 L3.6 11 L5.5 7 L7.4 11 L8.8 6" stroke="#fff" stroke-width="1.2" fill="none"/></svg>
<svg style="position:absolute;left:13px;top:327px;" width="18" height="18" viewBox="0 0 18 18"><circle cx="9" cy="9" r="8.6" fill="#75a7d9"/><text x="9" y="12.8" font-family="Liberation Serif" font-size="11" fill="#fff" text-anchor="middle">R</text></svg>
<svg style="position:absolute;left:14px;top:608px;" width="17" height="17" viewBox="0 0 17 17"><circle cx="7.5" cy="7.5" r="7" fill="#1e88e5"/><circle cx="7.5" cy="7.5" r="5.6" fill="#fff" opacity="0"/><text x="7.5" y="11.3" font-family="Liberation Sans" font-weight="bold" font-size="11" fill="#fff" text-anchor="middle">?</text><circle cx="12.5" cy="12" r="3.6" fill="#f2a92c" stroke="#fff" stroke-width="0.8"/><rect x="12" y="10.3" width="1" height="3.5" fill="#fff"/></svg>
<svg style="position:absolute;left:28px;top:630px;" width="8" height="10" viewBox="0 0 8 10"><path d="M2 1 L6 5 L2 9" fill="none" stroke="#1d1d1d" stroke-width="1.3"/></svg>
<svg style="position:absolute;left:10px;top:645px;" width="11" height="13" viewBox="0 0 11 13"><rect x="1" y="3" width="6.5" height="8" rx="2" fill="none" stroke="#1d1d1d" stroke-width="1.1"/><path d="M7.5 5.5 L10 4 V10 L7.5 8.5" fill="none" stroke="#1d1d1d" stroke-width="1.1"/><circle cx="4.2" cy="6" r="1.3" fill="#1d1d1d"/></svg>
<svg style="position:absolute;left:25px;top:646px;" width="14" height="10" viewBox="0 0 14 10"><path d="M3 9 Q0.5 9 0.8 6.8 Q1.2 5 3.2 5.2 Q4 1.5 7.8 1.8 Q10.8 2.2 11 5 Q13.5 5.2 13.3 7.3 Q13 9 11 9Z" fill="none" stroke="#1d1d1d" stroke-width="1.1"/></svg>
<svg style="position:absolute;left:9px;top:663px;" width="14" height="13" viewBox="0 0 14 13"><g fill="none" stroke="#1d1d1d" stroke-width="1.1"><path d="M2 12 Q2.5 6 9 2.5"/><path d="M4.5 12 Q5 8 10.5 5"/><path d="M7 12 Q7.3 10 11.5 7.8"/></g><path d="M1.5 12.5 L12.5 1.5 L12.5 12.5Z" fill="#1d1d1d" opacity="0.12"/></svg>
<div style="left:13.90px;top:681.00px;line-height:20px;font-size:8.8px;color:#1d1d1d;font-family:'Liberation Sans',sans-serif;white-space:pre;transform-origin:0 0;transform:scaleX(0.8495);-webkit-text-stroke:0.2px #1d1d1d;">ENG</div>
<div style="left:6.20px;top:707.00px;line-height:20px;font-size:8.8px;color:#1d1d1d;font-family:'Liberation Sans',sans-serif;white-space:pre;transform-origin:0 0;transform:scaleX(0.9765);-webkit-text-stroke:0.2px #1d1d1d;">9:18 PM</div>
<div style="left:3.50px;top:720.00px;line-height:20px;font-size:8.8px;color:#1d1d1d;font-family:'Liberation Sans',sans-serif;white-space:pre;transform-origin:0 0;transform:scaleX(0.9451);-webkit-text-stroke:0.2px #1d1d1d;">12/4/2021</div>
<svg style="position:absolute;left:14px;top:746px;" width="22" height="22" viewBox="0 0 22 22"><path d="M1.5 1.5 H13.5 V10.5 H6 L3 13.5 V10.5 H1.5Z" fill="#1d1d1d"/><path d="M3.5 4 H11.5 M3.5 6.2 H11.5 M3.5 8.4 H9" stroke="#d0e4ef" stroke-width="0.9"/><circle cx="14.5" cy="14.5" r="5.2" fill="#c9d0d5" stroke="#5a5f63" stroke-width="1"/><text x="14.5" y="17.6" font-family="Liberation Sans" font-size="8" fill="#111" text-anchor="middle">1</text></svg>
<svg style="position:absolute;left:46px;top:2px;" width="13" height="13" viewBox="0 0 13 13"><circle cx="6.5" cy="6.5" r="6" fill="#75a7d9"/><text x="6.5" y="9.6" font-family="Liberation Serif" font-size="8.5" fill="#fff" text-anchor="middle">R</text></svg>
<svg style="position:absolute;left:1290px;top:2px;" width="12" height="12" viewBox="0 0 12 12"><path d="M1 6.5 H11" stroke="#fff" stroke-width="1"/></svg>
<svg style="position:absolute;left:1322px;top:1px;" width="14" height="14" viewBox="0 0 14 14"><g fill="none" stroke="#fff" stroke-width="1"><rect x="2.5" y="4.5" width="7" height="7"/><path d="M4.5 4.5 V2.5 H11.5 V9.5 H9.5"/></g></svg>
<svg style="position:absolute;left:1356px;top:1px;" width="14" height="14" viewBox="0 0 14 14"><path d="M2 2 L12 12 M12 2 L2 12" stroke="#fff" stroke-width="1.1"/></svg>
<svg style="position:absolute;left:51px;top:39px;" width="10" height="11" viewBox="0 0 10 11"><rect x="1" y="1" width="8" height="9.5" fill="#fff" stroke="#e3e6e8" stroke-width="0.6"/></svg>
<svg style="position:absolute;left:47.6px;top:38.2px;" width="9.6" height="9.6" viewBox="0 0 9.6 9.6"><circle cx="4.8" cy="4.8" r="3.8" fill="#18a04c" stroke="#fff" stroke-width="0.5"/><path d="M4.8 2.444 V7.156 M2.444 4.8 H7.156" stroke="#fff" stroke-width="1.60"/></svg>
<svg style="position:absolute;left:65.55px;top:43.55px;" width="4.5" height="3" viewBox="0 0 4.5 3"><path d="M0 0 H4.5 L2.25 2.6Z" fill="#1a1a1a"/></svg>
<div style="left:72px;top:39px;width:1px;height:11px;background:#d4d8db;"></div>
<svg style="position:absolute;left:83px;top:39px;" width="9" height="12" viewBox="0 0 9 12"><path d="M1 2 L5 0.5 L8.5 2 V10 L5 11.5 L1 10Z" fill="#a9cdea"/><text x="5" y="9" font-family="Liberation Sans" font-size="7" font-weight="bold" fill="#2b6cb0" text-anchor="middle">R</text></svg>
<svg style="position:absolute;left:76.2px;top:38.2px;" width="9.6" height="9.6" viewBox="0 0 9.6 9.6"><circle cx="4.8" cy="4.8" r="3.8" fill="#18a04c" stroke="#fff" stroke-width="0.5"/><path d="M4.8 2.444 V7.156 M2.444 4.8 H7.156" stroke="#fff" stroke-width="1.60"/></svg>
<div style="left:95px;top:39px;width:1px;height:11px;background:#d4d8db;"></div>
<svg style="position:absolute;left:100px;top:39.5px;" width="15" height="11" viewBox="0 0 15 11"><path d="M1 3 H5 L6 2 H12 V9.5 H1Z" fill="#e8b43d"/><path d="M3 4 Q7 1 11 4" fill="none" stroke="#fff" stroke-width="1.2"/><path d="M0.5 5 H12.5 L11 10.5 H1.5Z" fill="#f6c75a" stroke="#d29a26" stroke-width="0.6"/><path d="M6 5 Q8 2.5 11 3 V1.5 L14 4 L11 6.3 V4.8 Q8 4.6 6 5Z" fill="#1a9b5a"/></svg>
<svg style="position:absolute;left:116.55px;top:43.55px;" width="4.5" height="3" viewBox="0 0 4.5 3"><path d="M0 0 H4.5 L2.25 2.6Z" fill="#1a1a1a"/></svg>
<div style="left:124px;top:39px;width:1px;height:11px;background:#d4d8db;"></div>
<svg style="position:absolute;left:131px;top:40.4px;" width="10" height="10" viewBox="0 0 10 10"><g transform="scale(1.0)"><path d="M0.5 0.5 H8.5 V9.5 H0.5Z" fill="none" stroke="#4a8fd6" stroke-width="1.1"/><rect x="2" y="0.5" width="5" height="3.2" fill="#fff" stroke="#4a8fd6" stroke-width="0.9"/><rect x="2.3" y="6" width="4.4" height="3.5" fill="#4a8fd6"/><rect x="3.8" y="7" width="1.4" height="2.5" fill="#fff"/></g></svg>
<svg style="position:absolute;left:146px;top:39px;" width="13" height="12" viewBox="0 0 13 12"><g fill="none" stroke="#4a8fd6" stroke-width="1"><path d="M3.5 0.8 H12 V9 H10"/></g></svg>
<svg style="position:absolute;left:147.3px;top:40.8px;" width="9.6" height="9.6" viewBox="0 0 9.6 9.6"><g transform="scale(0.9555555555555555)"><path d="M0.5 0.5 H8.5 V9.5 H0.5Z" fill="none" stroke="#4a8fd6" stroke-width="1.1"/><rect x="2" y="0.5" width="5" height="3.2" fill="#fff" stroke="#4a8fd6" stroke-width="0.9"/><rect x="2.3" y="6" width="4.4" height="3.5" fill="#4a8fd6"/><rect x="3.8" y="7" width="1.4" height="2.5" fill="#fff"/></g></svg>
<div style="left:163px;top:39px;width:1px;height:11px;background:#d4d8db;"></div>
<svg style="position:absolute;left:169px;top:39px;" width="13" height="11" viewBox="0 0 13 11"><rect x="3.5" y="0.5" width="6" height="4" fill="#f8d7a6" stroke="#e0b070" stroke-width="0.5"/><path d="M1 4 H12 Q12.5 4 12.5 5 V8.5 H0.5 V5 Q0.5 4 1 4Z" fill="#e6eef5" stroke="#a9b7c3" stroke-width="0.7"/><rect x="2" y="8" width="9" height="2" fill="#98a4ae"/></svg>
<div style="left:185px;top:39px;width:1px;height:11px;background:#d4d8db;"></div>
<svg style="position:absolute;left:195px;top:40px;" width="11" height="9" viewBox="0 0 11 9"><path d="M1 8.5 Q2 3.5 6.5 3.2 V0.8 L10.5 4.2 L6.5 7.6 V5.3 Q3 5.3 1 8.5Z" fill="#8b949c"/></svg>
<div style="left:302px;top:39px;width:1px;height:11px;background:#d4d8db;"></div>
<svg style="position:absolute;left:308px;top:39px;" width="12" height="11" viewBox="0 0 12 11"><g fill="#fff" stroke="#cfd3d6" stroke-width="1.2"><rect x="0.8" y="0.8" width="4.4" height="4.2"/><rect x="6.6" y="0.8" width="4.4" height="4.2"/><rect x="0.8" y="6.2" width="4.4" height="4.2"/><rect x="6.6" y="6.2" width="4.4" height="4.2"/></g></svg>
<svg style="position:absolute;left:324.65px;top:43.55px;" width="4.5" height="3" viewBox="0 0 4.5 3"><path d="M0 0 H4.5 L2.25 2.6Z" fill="#1a1a1a"/></svg>
<svg style="position:absolute;left:364.05px;top:43.55px;" width="4.5" height="3" viewBox="0 0 4.5 3"><path d="M0 0 H4.5 L2.25 2.6Z" fill="#1a1a1a"/></svg>
<svg style="position:absolute;left:1297px;top:37px;" width="15" height="15" viewBox="0 0 15 15"><path d="M7.5 1 L13.5 3.5 V11 L7.5 14 L1.5 11 V3.5Z" fill="#b3d4ee" stroke="#8fb6d8" stroke-width="0.6"/><text x="7.5" y="10.5" font-family="Liberation Serif" font-size="8" fill="#2b6cb0" text-anchor="middle">R</text></svg>
<svg style="position:absolute;left:1370.25px;top:43.75px;" width="4.5" height="3" viewBox="0 0 4.5 3"><path d="M0 0 H4.5 L2.25 2.6Z" fill="#1a1a1a"/></svg>
<svg style="position:absolute;left:57px;top:61px;" width="9" height="11" viewBox="0 0 9 11"><path d="M0.5 0.5 H5.5 L8.5 3.5 V10.5 H0.5Z" fill="#fff" stroke="#a0a6ac" stroke-width="0.8"/><path d="M5.5 0.5 V3.5 H8.5" fill="none" stroke="#a0a6ac" stroke-width="0.6"/></svg>
<svg style="position:absolute;left:55px;top:60px;" width="8" height="8" viewBox="0 0 8 8"><circle cx="4" cy="4" r="3.4" fill="#2e86de"/><path d="M2 2.5 Q4 3 3.5 5 Q5 5.5 5.5 3.5" fill="#f0a030"/></svg>
<svg style="position:absolute;left:237px;top:61px;" width="9" height="11" viewBox="0 0 9 11"><path d="M0.5 0.5 H5.5 L8.5 3.5 V10.5 H0.5Z" fill="#fff" stroke="#a0a6ac" stroke-width="0.8"/><path d="M5.5 0.5 V3.5 H8.5" fill="none" stroke="#a0a6ac" stroke-width="0.6"/></svg>
<svg style="position:absolute;left:236px;top:61px;" width="7" height="7" viewBox="0 0 7 7"><circle cx="3.5" cy="3.5" r="3" fill="#2d6fb5"/><text x="3.5" y="5.3" font-family="Liberation Sans" font-size="4.8" font-weight="bold" fill="#fff" text-anchor="middle">R</text></svg>
<svg style="position:absolute;left:308px;top:61px;" width="9" height="11" viewBox="0 0 9 11"><path d="M0.5 0.5 H5.5 L8.5 3.5 V10.5 H0.5Z" fill="#fff" stroke="#a0a6ac" stroke-width="0.8"/><path d="M5.5 0.5 V3.5 H8.5" fill="none" stroke="#a0a6ac" stroke-width="0.6"/></svg>
<svg style="position:absolute;left:307px;top:61px;" width="7" height="7" viewBox="0 0 7 7"><circle cx="3.5" cy="3.5" r="3" fill="#2d6fb5"/><text x="3.5" y="5.3" font-family="Liberation Sans" font-size="4.8" font-weight="bold" fill="#fff" text-anchor="middle">R</text></svg>
<svg style="position:absolute;left:476px;top:61px;" width="9" height="11" viewBox="0 0 9 11"><path d="M0.5 0.5 H5.5 L8.5 3.5 V10.5 H0.5Z" fill="#fff" stroke="#a0a6ac" stroke-width="0.8"/><path d="M5.5 0.5 V3.5 H8.5" fill="none" stroke="#a0a6ac" stroke-width="0.6"/></svg>
<svg style="position:absolute;left:475px;top:61px;" width="7" height="7" viewBox="0 0 7 7"><circle cx="3.5" cy="3.5" r="3.1" fill="#c2253c"/><path d="M1.3 3.5 H5.7" stroke="#fff" stroke-width="1.1"/></svg>
<svg style="position:absolute;left:604px;top:61px;" width="9" height="11" viewBox="0 0 9 11"><path d="M0.5 0.5 H5.5 L8.5 3.5 V10.5 H0.5Z" fill="#fff" stroke="#a0a6ac" stroke-width="0.8"/><path d="M5.5 0.5 V3.5 H8.5" fill="none" stroke="#a0a6ac" stroke-width="0.6"/></svg>
<svg style="position:absolute;left:603px;top:61px;" width="7" height="7" viewBox="0 0 7 7"><circle cx="3.5" cy="3.5" r="3" fill="#2d6fb5"/><text x="3.5" y="5.3" font-family="Liberation Sans" font-size="4.8" font-weight="bold" fill="#fff" text-anchor="middle">R</text></svg>
<svg style="position:absolute;left:672px;top:61px;" width="9" height="11" viewBox="0 0 9 11"><path d="M0.5 0.5 H5.5 L8.5 3.5 V10.5 H0.5Z" fill="#fff" stroke="#a0a6ac" stroke-width="0.8"/><path d="M5.5 0.5 V3.5 H8.5" fill="none" stroke="#a0a6ac" stroke-width="0.6"/></svg>
<svg style="position:absolute;left:671px;top:61px;" width="7" height="7" viewBox="0 0 7 7"><circle cx="3.5" cy="3.5" r="3" fill="#2d6fb5"/><text x="3.5" y="5.3" font-family="Liberation Sans" font-size="4.8" font-weight="bold" fill="#fff" text-anchor="middle">R</text></svg>
<svg style="position:absolute;left:719px;top:63.5px;" width="9" height="8" viewBox="0 0 9 8"><path d="M0.8 0.8 L3.8 4 L0.8 7.2 M4.6 0.8 L7.6 4 L4.6 7.2" fill="none" stroke="#6e757b" stroke-width="1.2"/></svg>
<svg style="position:absolute;left:734px;top:63px;" width="24" height="10" viewBox="0 0 24 10"><rect x="0.7" y="5.2" width="10" height="3.6" rx="0.8" fill="#fff" stroke="#6e757b" stroke-width="1.1"/><rect x="13.7" y="0.7" width="9.6" height="8.2" fill="#fff" stroke="#6e757b" stroke-width="1.1"/><rect x="13.7" y="0.7" width="9.6" height="1.6" fill="#6e757b"/></svg>
<svg style="position:absolute;left:1343.5px;top:63px;" width="24" height="10" viewBox="0 0 24 10"><rect x="0.7" y="5.2" width="10" height="3.6" rx="0.8" fill="#fff" stroke="#6e757b" stroke-width="1.1"/><rect x="13.7" y="0.7" width="9.6" height="8.2" fill="#fff" stroke="#6e757b" stroke-width="1.1"/><rect x="13.7" y="0.7" width="9.6" height="1.6" fill="#6e757b"/></svg>
<svg style="position:absolute;left:734px;top:479px;" width="24" height="10" viewBox="0 0 24 10"><rect x="0.7" y="5.2" width="10" height="3.6" rx="0.8" fill="#fff" stroke="#6e757b" stroke-width="1.1"/><rect x="13.7" y="0.7" width="9.6" height="8.2" fill="#fff" stroke="#6e757b" stroke-width="1.1"/><rect x="13.7" y="0.7" width="9.6" height="1.6" fill="#6e757b"/></svg>
<svg style="position:absolute;left:1343.5px;top:328px;" width="24" height="10" viewBox="0 0 24 10"><rect x="0.7" y="5.2" width="10" height="3.6" rx="0.8" fill="#fff" stroke="#6e757b" stroke-width="1.1"/><rect x="13.7" y="0.7" width="9.6" height="8.2" fill="#fff" stroke="#6e757b" stroke-width="1.1"/><rect x="13.7" y="0.7" width="9.6" height="1.6" fill="#6e757b"/></svg>
<svg style="position:absolute;left:56px;top:78px;" width="25" height="10" viewBox="0 0 25 10"><g fill="#fff" stroke="#d5d9dc" stroke-width="1.1"><path d="M1 4.8 L5 0.8 V3 H11 V6.6 H5 V8.8Z"/><path d="M23 4.8 L19 0.8 V3 H13 V6.6 H19 V8.8Z"/></g></svg>
<div style="left:85px;top:78px;width:1px;height:10px;background:#d4d8db;"></div>
<svg style="position:absolute;left:91px;top:78px;" width="13" height="10" viewBox="0 0 13 10"><rect x="3.5" y="0.6" width="9" height="8.8" rx="1.5" fill="#fff" stroke="#c8ccd0" stroke-width="0.8"/><rect x="3.5" y="0.6" width="9" height="2.2" rx="1" fill="#bfe0f7"/><path d="M0.8 9 L5 5 M2.5 5 H5 V7.5" fill="none" stroke="#8a9299" stroke-width="0.9"/></svg>
<div style="left:108px;top:78px;width:1px;height:10px;background:#d4d8db;"></div>
<svg style="position:absolute;left:115px;top:78px;" width="10" height="10" viewBox="0 0 10 10"><g transform="scale(1.0)"><path d="M0.5 0.5 H8.5 V9.5 H0.5Z" fill="none" stroke="#4a8fd6" stroke-width="1.1"/><rect x="2" y="0.5" width="5" height="3.2" fill="#fff" stroke="#4a8fd6" stroke-width="0.9"/><rect x="2.3" y="6" width="4.4" height="3.5" fill="#4a8fd6"/><rect x="3.8" y="7" width="1.4" height="2.5" fill="#fff"/></g></svg>
<div style="left:130.5px;top:78.5px;width:8.5px;height:8.5px;background:#fff;border:1px solid #adadad;box-sizing:border-box;border-radius:2px;"></div>
<div style="left:202.5px;top:78px;width:1px;height:10px;background:#d4d8db;"></div>
<svg style="position:absolute;left:208px;top:76px;" width="13" height="13" viewBox="0 0 13 13"><circle cx="5" cy="5" r="3.6" fill="#d9eefc" stroke="#7c8790" stroke-width="1.2"/><path d="M7.7 7.7 L11.5 11.5" stroke="#8a5a2a" stroke-width="1.8" stroke-linecap="round"/></svg>
<svg style="position:absolute;left:224px;top:75px;" width="15" height="14" viewBox="0 0 15 14"><path d="M1.5 12.5 L10 4" stroke="#2a3f63" stroke-width="1.8" stroke-linecap="round"/><path d="M1.5 12.5 L3 11" stroke="#4aa3df" stroke-width="1.8" stroke-linecap="round"/><g stroke="#f0994a" stroke-width="0.9"><path d="M11 1 V3.5 M13.2 2 L12 3.5 M14 5 H12 M9 1.5 L9.8 3"/></g></svg>
<svg style="position:absolute;left:241.75px;top:81.75px;" width="4.5" height="3" viewBox="0 0 4.5 3"><path d="M0 0 H4.5 L2.25 2.6Z" fill="#1a1a1a"/></svg>
<div style="left:249px;top:78px;width:1px;height:10px;background:#d4d8db;"></div>
<svg style="position:absolute;left:255px;top:77px;" width="11" height="11" viewBox="0 0 11 11"><rect x="0.8" y="0.8" width="9" height="9.5" rx="1.5" fill="#fff" stroke="#d0d4d7" stroke-width="0.9"/><rect x="0.8" y="0.8" width="2" height="9.5" fill="#d8dcdf"/><path d="M3.5 3.5 H9 M3.5 6 H9" stroke="#dbe9f5" stroke-width="0.7"/></svg>
<svg style="position:absolute;left:626px;top:77px;" width="15" height="10" viewBox="0 0 15 10"><rect x="1" y="0.8" width="7" height="8.8" rx="1" fill="#fff" stroke="#d0d4d7" stroke-width="0.7"/><path d="M1.5 5 H6" stroke="#7cb4e6" stroke-width="1"/><path d="M6 4.2 H10 V2 L13.5 5 L10 8 V5.8 H6Z" fill="#1a9b4b"/></svg>
<div style="left:662px;top:77px;width:1px;height:11px;background:#d4d8db;"></div>
<svg style="position:absolute;left:667px;top:77px;" width="15" height="10" viewBox="0 0 15 10"><rect x="1" y="0.8" width="7" height="8.8" rx="1" fill="#fff" stroke="#d0d4d7" stroke-width="0.7"/><path d="M2.5 5.5 Q2 2.5 5 2.5" fill="none" stroke="#2b6cd6" stroke-width="1.1"/><path d="M1 4.2 L2.6 6.3 L4 4.2Z" fill="#2b6cd6"/><path d="M6.5 4.2 H10 V2 L13.5 5 L10 8 V5.8 H6.5Z" fill="#1a9b4b"/></svg>
<div style="left:684.5px;top:77px;width:1px;height:11px;background:#d4d8db;"></div>
<svg style="position:absolute;left:689px;top:77px;" width="16" height="10" viewBox="0 0 16 10"><rect x="1" y="0.8" width="8" height="8.8" rx="1" fill="#fff" stroke="#c9cdd1" stroke-width="0.7"/><path d="M6 4.2 H10 V1.8 L13.5 5 L10 8.2 V5.8 H6Z" fill="#7eb6ea"/></svg>
<svg style="position:absolute;left:734.75px;top:81.75px;" width="4.5" height="3" viewBox="0 0 4.5 3"><path d="M0 0 H4.5 L2.25 2.6Z" fill="#1a1a1a"/></svg>
<div style="left:742.5px;top:77px;width:1px;height:11px;background:#d4d8db;"></div>
<svg style="position:absolute;left:749px;top:77px;" width="10" height="9" viewBox="0 0 10 9"><path d="M1 1 H9 M1 7.5 H9 M3 3 H7 M3 5.5 H7" stroke="#c9cdd1" stroke-width="1"/><path d="M5 1 V7.5" stroke="#c9cdd1" stroke-width="0.8"/></svg>
<svg style="position:absolute;left:142px;top:494px;" width="9" height="8" viewBox="0 0 9 8"><path d="M1 7 Q1.5 3 5 3 V1 L8.3 4 L5 7 V5 Q2.5 5 1 7Z" fill="none" stroke="#c8ccd0" stroke-width="0.8"/></svg>
<svg style="position:absolute;left:746px;top:490px;" width="13" height="12" viewBox="0 0 13 12"><path d="M12 1 L6.5 7" stroke="#c4c8cc" stroke-width="0.9"/><path d="M6.5 6 Q3 7 1 11 Q5 11 7.5 8Z" fill="#e6e9eb" stroke="#c4c8cc" stroke-width="0.7"/></svg>
<div style="left:754px;top:506px;width:10px;height:264px;background:#f1f1f1;"></div>
<div style="left:754px;top:623px;width:9px;height:135px;background:#c6c6c6;"></div>
<svg style="position:absolute;left:755px;top:509px;" width="8" height="6" viewBox="0 0 8 6"><path d="M1 5 L4 1.5 L7 5Z" fill="#555"/></svg>
<svg style="position:absolute;left:755px;top:761px;" width="8" height="6" viewBox="0 0 8 6"><path d="M1 1 L4 4.5 L7 1Z" fill="#6a6e72"/></svg>
<svg style="position:absolute;left:775px;top:78px;" width="15" height="11" viewBox="0 0 15 11"><path d="M1 3 H5 L6 2 H12 V9.5 H1Z" fill="#e8b43d"/><path d="M3 4 Q7 1 11 4" fill="none" stroke="#fff" stroke-width="1.2"/><path d="M0.5 5 H12.5 L11 10.5 H1.5Z" fill="#f6c75a" stroke="#d29a26" stroke-width="0.6"/><path d="M6 5 Q8 2.5 11 3 V1.5 L14 4 L11 6.3 V4.8 Q8 4.6 6 5Z" fill="#1a9b5a"/></svg>
<svg style="position:absolute;left:795px;top:78.5px;" width="10" height="10" viewBox="0 0 10 10"><g transform="scale(1.0)"><path d="M0.5 0.5 H8.5 V9.5 H0.5Z" fill="none" stroke="#4a8fd6" stroke-width="1.1"/><rect x="2" y="0.5" width="5" height="3.2" fill="#fff" stroke="#4a8fd6" stroke-width="0.9"/><rect x="2.3" y="6" width="4.4" height="3.5" fill="#4a8fd6"/><rect x="3.8" y="7" width="1.4" height="2.5" fill="#fff"/></g></svg>
<div style="left:810.5px;top:78px;width:1px;height:10px;background:#d4d8db;"></div>
<svg style="position:absolute;left:815px;top:77px;" width="16" height="11" viewBox="0 0 16 11"><g fill="#fff" stroke="#cfd6dd" stroke-width="0.7"><rect x="0.5" y="1.5" width="10" height="8.5"/><path d="M0.5 4.3 H10.5 M0.5 7.1 H10.5 M3.8 1.5 V10 M7.1 1.5 V10"/></g><path d="M5 5.5 Q7 2.5 10.5 3 V1.2 L14 4 L10.5 6.8 V5 Q7.5 4.7 5 5.5Z" fill="#1a9b5a"/></svg>
<svg style="position:absolute;left:886.75px;top:81.75px;" width="4.5" height="3" viewBox="0 0 4.5 3"><path d="M0 0 H4.5 L2.25 2.6Z" fill="#1a1a1a"/></svg>
<div style="left:896.5px;top:78px;width:1px;height:10px;background:#d4d8db;"></div>
<svg style="position:absolute;left:901px;top:75px;" width="13" height="13" viewBox="0 0 13 13"><path d="M12 1 L7.5 6" stroke="#c0392b" stroke-width="1.3"/><path d="M7.5 5.5 Q3.5 6 1 11.5 Q6 12 8.5 7.5Z" fill="#d9a441" stroke="#b07e24" stroke-width="0.5"/><path d="M3 9.5 L6 7.5 M4.5 10.5 L7 8" stroke="#b07e24" stroke-width="0.5"/></svg>
<svg style="position:absolute;left:1309px;top:78px;" width="10" height="10" viewBox="0 0 10 10"><path d="M1 1.5 H9 M1 3.8 H9 M1 6.1 H9 M1 8.4 H9" stroke="#8e969c" stroke-width="0.8"/></svg>
<svg style="position:absolute;left:1337.75px;top:81.75px;" width="4.5" height="3" viewBox="0 0 4.5 3"><path d="M0 0 H4.5 L2.25 2.6Z" fill="#1a1a1a"/></svg>
<div style="left:1347.5px;top:77px;width:1px;height:11px;background:#d4d8db;"></div>
<svg style="position:absolute;left:1352px;top:76px;" width="12" height="13" viewBox="0 0 12 13"><path d="M10 6.5 A4.3 4.3 0 1 1 8.3 3" fill="none" stroke="#c9d9e6" stroke-width="1.6"/><path d="M7 1 L10.5 2.6 L8 5.2Z" fill="#b7d3ea"/></svg>
<svg style="position:absolute;left:1366.75px;top:82.25px;" width="4.5" height="3" viewBox="0 0 4.5 3"><path d="M0 0 H4.5 L2.25 2.6Z" fill="#1a1a1a"/></svg>
<svg style="position:absolute;left:777px;top:93px;" width="12" height="13" viewBox="0 0 12 13"><rect x="0.5" y="3" width="6.8" height="6.8" fill="#9ccb6f"/><rect x="2.5" y="0.5" width="6.8" height="6.8" fill="#b06bd1" opacity="0.9"/><rect x="4.6" y="4.8" width="6.8" height="7" fill="#4f8fe6" opacity="0.95"/></svg>
<svg style="position:absolute;left:863.75px;top:98.25px;" width="4.5" height="3" viewBox="0 0 4.5 3"><path d="M0 0 H4.5 L2.25 2.6Z" fill="#1a1a1a"/></svg>
<svg style="position:absolute;left:1285px;top:95px;" width="10" height="10" viewBox="0 0 10 10"><circle cx="4" cy="4" r="3" fill="none" stroke="#7d858b" stroke-width="1.1"/><path d="M6.2 6.2 L9 9" stroke="#7d858b" stroke-width="1.4"/></svg>
<svg style="position:absolute;left:774.5px;top:125.30000000000001px;" width="9" height="9" viewBox="0 0 9 9"><circle cx="4.5" cy="4.5" r="4" fill="#5a9bd8"/><path d="M3.3 2.5 L6.3 4.5 L3.3 6.5Z" fill="#fff"/></svg>
<svg style="position:absolute;left:774.5px;top:140.25px;" width="9" height="9" viewBox="0 0 9 9"><circle cx="4.5" cy="4.5" r="4" fill="#5a9bd8"/><path d="M3.3 2.5 L6.3 4.5 L3.3 6.5Z" fill="#fff"/></svg>
<svg style="position:absolute;left:774.5px;top:155.20000000000002px;" width="9" height="9" viewBox="0 0 9 9"><circle cx="4.5" cy="4.5" r="4" fill="#5a9bd8"/><path d="M3.3 2.5 L6.3 4.5 L3.3 6.5Z" fill="#fff"/></svg>
<svg style="position:absolute;left:1350px;top:124.80000000000001px;" width="12" height="10" viewBox="0 0 12 10"><rect x="0.6" y="0.6" width="10" height="8.5" rx="1" fill="#fff" stroke="#c6d1da" stroke-width="0.8"/><rect x="0.6" y="0.6" width="10" height="1.8" fill="#c9e3f7"/><path d="M0.6 4.5 H10.6 M0.6 6.8 H10.6 M3.9 2.4 V9 M7.2 2.4 V9" stroke="#dde4ea" stroke-width="0.6"/></svg>
<svg style="position:absolute;left:1350px;top:139.75px;" width="12" height="10" viewBox="0 0 12 10"><rect x="0.6" y="0.6" width="10" height="8.5" rx="1" fill="#fff" stroke="#c6d1da" stroke-width="0.8"/><rect x="0.6" y="0.6" width="10" height="1.8" fill="#c9e3f7"/><path d="M0.6 4.5 H10.6 M0.6 6.8 H10.6 M3.9 2.4 V9 M7.2 2.4 V9" stroke="#dde4ea" stroke-width="0.6"/></svg>
<svg style="position:absolute;left:1350px;top:154px;" width="11" height="11" viewBox="0 0 11 11"><circle cx="4.2" cy="4.2" r="3" fill="none" stroke="#737b81" stroke-width="1.2"/><path d="M6.5 6.5 L9.5 9.5" stroke="#737b81" stroke-width="1.5"/></svg>
<svg style="position:absolute;left:774px;top:341px;" width="16" height="12" viewBox="0 0 16 12"><path d="M4 4 H8 L9 3 H14.5 V11.5 H4Z" fill="#e8b43d"/><path d="M4 6 H15 L14 11.5 H4Z" fill="#f6c75a"/></svg>
<svg style="position:absolute;left:774.0px;top:341.2px;" width="8.6" height="8.6" viewBox="0 0 8.6 8.6"><circle cx="4.3" cy="4.3" r="3.3" fill="#18a04c" stroke="#fff" stroke-width="0.5"/><path d="M4.3 2.254 V6.346 M2.254 4.3 H6.346" stroke="#fff" stroke-width="1.39"/></svg>
<div style="left:837.5px;top:342px;width:1px;height:11px;background:#d4d8db;"></div>
<svg style="position:absolute;left:845px;top:342px;" width="10" height="11" viewBox="0 0 10 11"><rect x="1" y="1.5" width="8" height="9" fill="#fff" stroke="#e4e6e8" stroke-width="0.6"/></svg>
<svg style="position:absolute;left:841.5px;top:341.5px;" width="9" height="9" viewBox="0 0 9 9"><circle cx="4.5" cy="4.5" r="3.8" fill="#c8202a"/><path d="M2.8 2.8 L6.2 6.2 M6.2 2.8 L2.8 6.2" stroke="#fff" stroke-width="1.1"/></svg>
<svg style="position:absolute;left:888px;top:343px;" width="12" height="9" viewBox="0 0 12 9"><rect x="0.5" y="0.5" width="10.5" height="8" fill="#fff" stroke="#c5cace" stroke-width="0.7"/><path d="M3 4.5 H7 V2.8 L9.5 4.5 L7 6.2Z" fill="#2f8fe0"/><path d="M3 4.2 H7 V4.8 H3Z" fill="#2f8fe0"/></svg>
<div style="left:937.5px;top:342px;width:1px;height:11px;background:#d4d8db;"></div>
<svg style="position:absolute;left:943px;top:341px;" width="12" height="12" viewBox="0 0 12 12"><g transform="translate(6 6)"><circle r="4.2" fill="#4b9be0"/><g fill="#4b9be0"><rect x="-1.1" y="-5.8" width="2.2" height="2.4" transform="rotate(0)"/><rect x="-1.1" y="-5.8" width="2.2" height="2.4" transform="rotate(45)"/><rect x="-1.1" y="-5.8" width="2.2" height="2.4" transform="rotate(90)"/><rect x="-1.1" y="-5.8" width="2.2" height="2.4" transform="rotate(135)"/><rect x="-1.1" y="-5.8" width="2.2" height="2.4" transform="rotate(180)"/><rect x="-1.1" y="-5.8" width="2.2" height="2.4" transform="rotate(225)"/><rect x="-1.1" y="-5.8" width="2.2" height="2.4" transform="rotate(270)"/><rect x="-1.1" y="-5.8" width="2.2" height="2.4" transform="rotate(315)"/></g><circle r="1.8" fill="#d8ecfa"/></g></svg>
<svg style="position:absolute;left:979.45px;top:346.75px;" width="4.5" height="3" viewBox="0 0 4.5 3"><path d="M0 0 H4.5 L2.25 2.6Z" fill="#1a1a1a"/></svg>
<svg style="position:absolute;left:1358px;top:340px;" width="12" height="13" viewBox="0 0 12 13"><path d="M10 6.5 A4.3 4.3 0 1 1 8.3 3" fill="none" stroke="#c9d9e6" stroke-width="1.6"/><path d="M7 1 L10.5 2.6 L8 5.2Z" fill="#b7d3ea"/></svg>
<div style="left:774.5px;top:358.5px;width:9px;height:9px;background:#fff;border:1px solid #adadad;box-sizing:border-box;border-radius:2px;"></div>
<svg style="position:absolute;left:788.5px;top:355.5px;" width="13" height="12" viewBox="0 0 13 12"><path d="M1 6.5 L6.5 1.2 L12 6.5" fill="none" stroke="#c8202a" stroke-width="1.5"/><path d="M2.7 6 V11.5 H10.3 V6 L6.5 2.5Z" fill="#f4e6d0" stroke="#b9a88e" stroke-width="0.4"/><rect x="5.3" y="7.5" width="2.4" height="4" fill="#b0601e"/></svg>
<div style="left:1359px;top:355px;width:1px;height:13px;background:#e0e3e5;"></div>
<div style="top:357.00px;line-height:14px;font-size:8px;color:#666;font-family:'Liberation Sans',sans-serif;white-space:pre;left:1366.5px;transform:translateX(-50%);">...</div>
<div style="left:792px;top:369px;width:1px;height:14px;background:#dfe2e4;"></div>
<div style="left:811px;top:369px;width:1px;height:14px;background:#dfe2e4;"></div>
<div style="left:1200px;top:369px;width:1px;height:14px;background:#dfe2e4;"></div>
<div style="left:1258px;top:369px;width:1px;height:14px;background:#dfe2e4;"></div>
<svg style="position:absolute;left:817.5px;top:373px;" width="8" height="6" viewBox="0 0 8 6"><path d="M0.5 5.5 L4 0.5 L7.5 5.5Z" fill="#777"/></svg>
<div style="left:1362px;top:384px;width:10px;height:386px;background:#f1f1f1;"></div>
<div style="left:1363px;top:396px;width:9px;height:131px;background:#c6c6c6;"></div>
<svg style="position:absolute;left:1363px;top:387px;" width="8" height="6" viewBox="0 0 8 6"><path d="M1 5 L4 1.5 L7 5Z" fill="#a0a0a0"/></svg>
<svg style="position:absolute;left:1363px;top:760px;" width="8" height="6" viewBox="0 0 8 6"><path d="M1 1 L4 4.5 L7 1Z" fill="#666"/></svg>
<div style="left:770px;top:384px;width:592px;height:386px;overflow:hidden;"><div style="position:absolute;left:43.20px;top:-2.00px;line-height:20px;font-size:8.65px;color:#1f1f9c;white-space:pre;transform-origin:0 0;transform:scaleX(0.965);-webkit-text-stroke:0.2px #1f1f9c;">..</div><svg style="position:absolute;left:27.00px;top:0.55px" width="11" height="11" viewBox="0 0 11 11"><path d="M2.5 9.5 H10 V7.5 H5 V5 H7.5 L4 0.8 L0.5 5 H3 V9.5Z" fill="#18a551"/></svg><div style="position:absolute;left:43.20px;top:15.00px;line-height:20px;font-size:8.65px;color:#1f1f9c;white-space:pre;transform-origin:0 0;transform:scaleX(0.965);-webkit-text-stroke:0.2px #1f1f9c;">.RData</div><div style="position:absolute;left:433.30px;top:15.00px;line-height:20px;font-size:8.5px;color:#222;white-space:pre;transform-origin:0 0;transform:scaleX(0.955);-webkit-text-stroke:0.2px #222;">32.4 KB</div><div style="position:absolute;left:490.70px;top:15.00px;line-height:20px;font-size:8.5px;color:#222;white-space:pre;transform-origin:0 0;transform:scaleX(0.955);-webkit-text-stroke:0.2px #222;">Aug 15, 2019, 10:03 PM</div><div style="position:absolute;left:7px;top:20.10px;width:9px;height:9px;box-sizing:border-box;border:1px solid #adadad;border-radius:2px;background:#fff"></div><svg style="position:absolute;left:28.00px;top:17.30px" width="11" height="13" viewBox="0 0 11 13"><path d="M0.5 0.5 H6.5 L9.5 3.5 V11.5 H0.5Z" fill="#fff" stroke="#b4b9bd" stroke-width="0.8"/><path d="M6.5 0.5 V3.5 H9.5" fill="none" stroke="#b4b9bd" stroke-width="0.6"/><rect x="0" y="1.5" width="5.5" height="6" fill="#2ba084"/><rect x="2" y="3" width="3" height="3.5" fill="#1d5e8a"/></svg><div style="position:absolute;left:43.20px;top:31.00px;line-height:20px;font-size:8.65px;color:#1f1f9c;white-space:pre;transform-origin:0 0;transform:scaleX(0.965);-webkit-text-stroke:0.2px #1f1f9c;">.Rhistory</div><div style="position:absolute;left:433.30px;top:31.00px;line-height:20px;font-size:8.5px;color:#222;white-space:pre;transform-origin:0 0;transform:scaleX(0.955);-webkit-text-stroke:0.2px #222;">17 KB</div><div style="position:absolute;left:490.70px;top:31.00px;line-height:20px;font-size:8.5px;color:#222;white-space:pre;transform-origin:0 0;transform:scaleX(0.955);-webkit-text-stroke:0.2px #222;">Dec 3, 2021, 9:48 PM</div><div style="position:absolute;left:7px;top:36.65px;width:9px;height:9px;box-sizing:border-box;border:1px solid #adadad;border-radius:2px;background:#fff"></div><svg style="position:absolute;left:28.00px;top:33.85px" width="11" height="13" viewBox="0 0 11 13"><path d="M0.5 0.5 H6.5 L9.5 3.5 V11.5 H0.5Z" fill="#fff" stroke="#b4b9bd" stroke-width="0.8"/><path d="M6.5 0.5 V3.5 H9.5" fill="none" stroke="#b4b9bd" stroke-width="0.6"/><circle cx="3.5" cy="4" r="2.8" fill="#fff" stroke="#8e969c" stroke-width="0.7"/><circle cx="3.5" cy="4" r="0.7" fill="#333"/></svg><div style="position:absolute;left:43.20px;top:48.00px;line-height:20px;font-size:8.65px;color:#1f1f9c;white-space:pre;transform-origin:0 0;transform:scaleX(0.965);-webkit-text-stroke:0.2px #1f1f9c;">Analyzing the number of Days from First Call to Appointment.pdf</div><div style="position:absolute;left:433.30px;top:48.00px;line-height:20px;font-size:8.5px;color:#222;white-space:pre;transform-origin:0 0;transform:scaleX(0.955);-webkit-text-stroke:0.2px #222;">204.1 KB</div><div style="position:absolute;left:490.70px;top:48.00px;line-height:20px;font-size:8.5px;color:#222;white-space:pre;transform-origin:0 0;transform:scaleX(0.955);-webkit-text-stroke:0.2px #222;">May 18, 2019, 7:22 PM</div><div style="position:absolute;left:7px;top:53.20px;width:9px;height:9px;box-sizing:border-box;border:1px solid #adadad;border-radius:2px;background:#fff"></div><svg style="position:absolute;left:27.50px;top:50.40px" width="11" height="13" viewBox="0 0 11 13"><path d="M0.5 0.5 H6.5 L9.5 3.5 V11.5 H0.5Z" fill="#fff" stroke="#b4b9bd" stroke-width="0.8"/><path d="M6.5 0.5 V3.5 H9.5" fill="none" stroke="#b4b9bd" stroke-width="0.6"/><rect x="0" y="0.8" width="6" height="2.2" fill="#d42027"/><path d="M2 10 Q4 5 5.5 4 Q6.5 6 9 8 Q5 7.5 2.5 9.5" fill="none" stroke="#e34a4a" stroke-width="0.8"/></svg><div style="position:absolute;left:43.20px;top:64.00px;line-height:20px;font-size:8.65px;color:#1f1f9c;white-space:pre;transform-origin:0 0;transform:scaleX(0.965);-webkit-text-stroke:0.2px #1f1f9c;">Analyzing the number of Days from First Call to Appointment1.pdf</div><div style="position:absolute;left:433.30px;top:64.00px;line-height:20px;font-size:8.5px;color:#222;white-space:pre;transform-origin:0 0;transform:scaleX(0.955);-webkit-text-stroke:0.2px #222;">204.1 KB</div><div style="position:absolute;left:490.70px;top:64.00px;line-height:20px;font-size:8.5px;color:#222;white-space:pre;transform-origin:0 0;transform:scaleX(0.955);-webkit-text-stroke:0.2px #222;">May 18, 2019, 7:42 PM</div><div style="position:absolute;left:7px;top:69.75px;width:9px;height:9px;box-sizing:border-box;border:1px solid #adadad;border-radius:2px;background:#fff"></div><svg style="position:absolute;left:27.50px;top:66.95px" width="11" height="13" viewBox="0 0 11 13"><path d="M0.5 0.5 H6.5 L9.5 3.5 V11.5 H0.5Z" fill="#fff" stroke="#b4b9bd" stroke-width="0.8"/><path d="M6.5 0.5 V3.5 H9.5" fill="none" stroke="#b4b9bd" stroke-width="0.6"/><rect x="0" y="0.8" width="6" height="2.2" fill="#d42027"/><path d="M2 10 Q4 5 5.5 4 Q6.5 6 9 8 Q5 7.5 2.5 9.5" fill="none" stroke="#e34a4a" stroke-width="0.8"/></svg><div style="position:absolute;left:43.20px;top:81.00px;line-height:20px;font-size:8.65px;color:#1f1f9c;white-space:pre;transform-origin:0 0;transform:scaleX(0.965);-webkit-text-stroke:0.2px #1f1f9c;">August2020.csv</div><div style="position:absolute;left:433.30px;top:81.00px;line-height:20px;font-size:8.5px;color:#222;white-space:pre;transform-origin:0 0;transform:scaleX(0.955);-webkit-text-stroke:0.2px #222;">672.3 KB</div><div style="position:absolute;left:490.70px;top:81.00px;line-height:20px;font-size:8.5px;color:#222;white-space:pre;transform-origin:0 0;transform:scaleX(0.955);-webkit-text-stroke:0.2px #222;">Dec 10, 2020, 2:04 PM</div><div style="position:absolute;left:7px;top:86.30px;width:9px;height:9px;box-sizing:border-box;border:1px solid #adadad;border-radius:2px;background:#fff"></div><svg style="position:absolute;left:28.00px;top:83.50px" width="11" height="13" viewBox="0 0 11 13"><rect x="0.5" y="0.5" width="9.5" height="11" rx="1" fill="#fff" stroke="#b8c2ca" stroke-width="0.8"/><rect x="0.5" y="0.5" width="9.5" height="1.8" fill="#b8cbdb"/><path d="M0.5 4.8 H10 M0.5 7.3 H10 M0.5 9.6 H10 M3.7 2.3 V11.5 M6.9 2.3 V11.5" stroke="#dce3e8" stroke-width="0.6"/></svg><div style="position:absolute;left:43.20px;top:97.00px;line-height:20px;font-size:8.65px;color:#1f1f9c;white-space:pre;transform-origin:0 0;transform:scaleX(0.965);-webkit-text-stroke:0.2px #1f1f9c;">August2020a.csv</div><div style="position:absolute;left:433.30px;top:97.00px;line-height:20px;font-size:8.5px;color:#222;white-space:pre;transform-origin:0 0;transform:scaleX(0.955);-webkit-text-stroke:0.2px #222;">518.9 KB</div><div style="position:absolute;left:490.70px;top:97.00px;line-height:20px;font-size:8.5px;color:#222;white-space:pre;transform-origin:0 0;transform:scaleX(0.955);-webkit-text-stroke:0.2px #222;">Dec 11, 2020, 2:53 PM</div><div style="position:absolute;left:7px;top:102.85px;width:9px;height:9px;box-sizing:border-box;border:1px solid #adadad;border-radius:2px;background:#fff"></div><svg style="position:absolute;left:28.00px;top:100.05px" width="11" height="13" viewBox="0 0 11 13"><rect x="0.5" y="0.5" width="9.5" height="11" rx="1" fill="#fff" stroke="#b8c2ca" stroke-width="0.8"/><rect x="0.5" y="0.5" width="9.5" height="1.8" fill="#b8cbdb"/><path d="M0.5 4.8 H10 M0.5 7.3 H10 M0.5 9.6 H10 M3.7 2.3 V11.5 M6.9 2.3 V11.5" stroke="#dce3e8" stroke-width="0.6"/></svg><div style="position:absolute;left:43.20px;top:114.00px;line-height:20px;font-size:8.65px;color:#1f1f9c;white-space:pre;transform-origin:0 0;transform:scaleX(0.965);-webkit-text-stroke:0.2px #1f1f9c;">Copy of MOB Stats May June and July 2018 (002) (1).xls</div><div style="position:absolute;left:433.30px;top:114.00px;line-height:20px;font-size:8.5px;color:#222;white-space:pre;transform-origin:0 0;transform:scaleX(0.955);-webkit-text-stroke:0.2px #222;">2.8 MB</div><div style="position:absolute;left:490.70px;top:114.00px;line-height:20px;font-size:8.5px;color:#222;white-space:pre;transform-origin:0 0;transform:scaleX(0.955);-webkit-text-stroke:0.2px #222;">Sep 28, 2018, 7:59 PM</div><div style="position:absolute;left:7px;top:119.40px;width:9px;height:9px;box-sizing:border-box;border:1px solid #adadad;border-radius:2px;background:#fff"></div><svg style="position:absolute;left:28.00px;top:116.60px" width="11" height="13" viewBox="0 0 11 13"><path d="M0.5 0.5 H6.5 L9.5 3.5 V11.5 H0.5Z" fill="#fff" stroke="#b4b9bd" stroke-width="0.8"/><path d="M6.5 0.5 V3.5 H9.5" fill="none" stroke="#b4b9bd" stroke-width="0.6"/></svg><div style="position:absolute;left:43.20px;top:130.00px;line-height:20px;font-size:8.65px;color:#1f1f9c;white-space:pre;transform-origin:0 0;transform:scaleX(0.965);-webkit-text-stroke:0.2px #1f1f9c;">December 2017 Late Line dataset creation.R</div><div style="position:absolute;left:433.30px;top:130.00px;line-height:20px;font-size:8.5px;color:#222;white-space:pre;transform-origin:0 0;transform:scaleX(0.955);-webkit-text-stroke:0.2px #222;">3 KB</div><div style="position:absolute;left:490.70px;top:130.00px;line-height:20px;font-size:8.5px;color:#222;white-space:pre;transform-origin:0 0;transform:scaleX(0.955);-webkit-text-stroke:0.2px #222;">May 16, 2018, 10:17 AM</div><div style="position:absolute;left:7px;top:135.95px;width:9px;height:9px;box-sizing:border-box;border:1px solid #adadad;border-radius:2px;background:#fff"></div><svg style="position:absolute;left:27.00px;top:133.15px" width="12" height="13" viewBox="0 0 12 13"><g transform="translate(1 0)"><path d="M0.5 0.5 H6.5 L9.5 3.5 V11.5 H0.5Z" fill="#fff" stroke="#b4b9bd" stroke-width="0.8"/><path d="M6.5 0.5 V3.5 H9.5" fill="none" stroke="#b4b9bd" stroke-width="0.6"/></g><circle cx="3.2" cy="3.6" r="3" fill="#3d74b0"/><text x="3.2" y="5.4" font-family="Liberation Sans" font-size="4.8" font-weight="bold" fill="#fff" text-anchor="middle">R</text></svg><div style="position:absolute;left:43.20px;top:147.00px;line-height:20px;font-size:8.65px;color:#1f1f9c;white-space:pre;transform-origin:0 0;transform:scaleX(0.965);-webkit-text-stroke:0.2px #1f1f9c;">Find Really Bad days.R</div><div style="position:absolute;left:433.30px;top:147.00px;line-height:20px;font-size:8.5px;color:#222;white-space:pre;transform-origin:0 0;transform:scaleX(0.955);-webkit-text-stroke:0.2px #222;">4.9 KB</div><div style="position:absolute;left:490.70px;top:147.00px;line-height:20px;font-size:8.5px;color:#222;white-space:pre;transform-origin:0 0;transform:scaleX(0.955);-webkit-text-stroke:0.2px #222;">Sep 12, 2019, 10:29 AM</div><div style="position:absolute;left:7px;top:152.50px;width:9px;height:9px;box-sizing:border-box;border:1px solid #adadad;border-radius:2px;background:#fff"></div><svg style="position:absolute;left:27.00px;top:149.70px" width="12" height="13" viewBox="0 0 12 13"><g transform="translate(1 0)"><path d="M0.5 0.5 H6.5 L9.5 3.5 V11.5 H0.5Z" fill="#fff" stroke="#b4b9bd" stroke-width="0.8"/><path d="M6.5 0.5 V3.5 H9.5" fill="none" stroke="#b4b9bd" stroke-width="0.6"/></g><circle cx="3.2" cy="3.6" r="3" fill="#3d74b0"/><text x="3.2" y="5.4" font-family="Liberation Sans" font-size="4.8" font-weight="bold" fill="#fff" text-anchor="middle">R</text></svg><div style="position:absolute;left:43.20px;top:164.00px;line-height:20px;font-size:8.65px;color:#1f1f9c;white-space:pre;transform-origin:0 0;transform:scaleX(0.965);-webkit-text-stroke:0.2px #1f1f9c;">July 2018 Late Line dataset creation.R</div><div style="position:absolute;left:433.30px;top:164.00px;line-height:20px;font-size:8.5px;color:#222;white-space:pre;transform-origin:0 0;transform:scaleX(0.955);-webkit-text-stroke:0.2px #222;">3 KB</div><div style="position:absolute;left:490.70px;top:164.00px;line-height:20px;font-size:8.5px;color:#222;white-space:pre;transform-origin:0 0;transform:scaleX(0.955);-webkit-text-stroke:0.2px #222;">Feb 27, 2019, 9:02 AM</div><div style="position:absolute;left:7px;top:169.05px;width:9px;height:9px;box-sizing:border-box;border:1px solid #adadad;border-radius:2px;background:#fff"></div><svg style="position:absolute;left:27.00px;top:166.25px" width="12" height="13" viewBox="0 0 12 13"><g transform="translate(1 0)"><path d="M0.5 0.5 H6.5 L9.5 3.5 V11.5 H0.5Z" fill="#fff" stroke="#b4b9bd" stroke-width="0.8"/><path d="M6.5 0.5 V3.5 H9.5" fill="none" stroke="#b4b9bd" stroke-width="0.6"/></g><circle cx="3.2" cy="3.6" r="3" fill="#3d74b0"/><text x="3.2" y="5.4" font-family="Liberation Sans" font-size="4.8" font-weight="bold" fill="#fff" text-anchor="middle">R</text></svg><div style="position:absolute;left:43.20px;top:180.00px;line-height:20px;font-size:8.65px;color:#1f1f9c;white-space:pre;transform-origin:0 0;transform:scaleX(0.965);-webkit-text-stroke:0.2px #1f1f9c;">Late Line April 2018.csv</div><div style="position:absolute;left:433.30px;top:180.00px;line-height:20px;font-size:8.5px;color:#222;white-space:pre;transform-origin:0 0;transform:scaleX(0.955);-webkit-text-stroke:0.2px #222;">159.9 KB</div><div style="position:absolute;left:490.70px;top:180.00px;line-height:20px;font-size:8.5px;color:#222;white-space:pre;transform-origin:0 0;transform:scaleX(0.955);-webkit-text-stroke:0.2px #222;">Oct 10, 2018, 2:33 PM</div><div style="position:absolute;left:7px;top:185.60px;width:9px;height:9px;box-sizing:border-box;border:1px solid #adadad;border-radius:2px;background:#fff"></div><svg style="position:absolute;left:28.00px;top:182.80px" width="11" height="13" viewBox="0 0 11 13"><rect x="0.5" y="0.5" width="9.5" height="11" rx="1" fill="#fff" stroke="#b8c2ca" stroke-width="0.8"/><rect x="0.5" y="0.5" width="9.5" height="1.8" fill="#b8cbdb"/><path d="M0.5 4.8 H10 M0.5 7.3 H10 M0.5 9.6 H10 M3.7 2.3 V11.5 M6.9 2.3 V11.5" stroke="#dce3e8" stroke-width="0.6"/></svg><div style="position:absolute;left:43.20px;top:197.00px;line-height:20px;font-size:8.65px;color:#1f1f9c;white-space:pre;transform-origin:0 0;transform:scaleX(0.965);-webkit-text-stroke:0.2px #1f1f9c;">Late Line August 2018 Really Bad Days.Rmd</div><div style="position:absolute;left:433.30px;top:197.00px;line-height:20px;font-size:8.5px;color:#222;white-space:pre;transform-origin:0 0;transform:scaleX(0.955);-webkit-text-stroke:0.2px #222;">4.4 KB</div><div style="position:absolute;left:490.70px;top:197.00px;line-height:20px;font-size:8.5px;color:#222;white-space:pre;transform-origin:0 0;transform:scaleX(0.955);-webkit-text-stroke:0.2px #222;">Jan 10, 2019, 8:28 PM</div><div style="position:absolute;left:7px;top:202.15px;width:9px;height:9px;box-sizing:border-box;border:1px solid #adadad;border-radius:2px;background:#fff"></div><svg style="position:absolute;left:27.00px;top:199.35px" width="12" height="13" viewBox="0 0 12 13"><g transform="translate(1 0)"><path d="M0.5 0.5 H6.5 L9.5 3.5 V11.5 H0.5Z" fill="#fff" stroke="#b4b9bd" stroke-width="0.8"/><path d="M6.5 0.5 V3.5 H9.5" fill="none" stroke="#b4b9bd" stroke-width="0.6"/></g><circle cx="3.2" cy="3.6" r="3.1" fill="#c2253c"/><path d="M1 3.6 H5.4" stroke="#fff" stroke-width="1.1"/></svg><div style="position:absolute;left:43.20px;top:213.00px;line-height:20px;font-size:8.65px;color:#1f1f9c;white-space:pre;transform-origin:0 0;transform:scaleX(0.965);-webkit-text-stroke:0.2px #1f1f9c;">Late Line August 2018 Really Bad Days.txt</div><div style="position:absolute;left:433.30px;top:213.00px;line-height:20px;font-size:8.5px;color:#222;white-space:pre;transform-origin:0 0;transform:scaleX(0.955);-webkit-text-stroke:0.2px #222;">3.3 KB</div><div style="position:absolute;left:490.70px;top:213.00px;line-height:20px;font-size:8.5px;color:#222;white-space:pre;transform-origin:0 0;transform:scaleX(0.955);-webkit-text-stroke:0.2px #222;">Jan 10, 2019, 8:27 PM</div><div style="position:absolute;left:7px;top:218.70px;width:9px;height:9px;box-sizing:border-box;border:1px solid #adadad;border-radius:2px;background:#fff"></div><svg style="position:absolute;left:28.00px;top:215.90px" width="11" height="13" viewBox="0 0 11 13"><path d="M0.5 0.5 H6.5 L9.5 3.5 V11.5 H0.5Z" fill="#fff" stroke="#b4b9bd" stroke-width="0.8"/><path d="M6.5 0.5 V3.5 H9.5" fill="none" stroke="#b4b9bd" stroke-width="0.6"/></svg><div style="position:absolute;left:43.20px;top:230.00px;line-height:20px;font-size:8.65px;color:#1f1f9c;white-space:pre;transform-origin:0 0;transform:scaleX(0.965);-webkit-text-stroke:0.2px #1f1f9c;">Late Line August 2018.csv</div><div style="position:absolute;left:433.30px;top:230.00px;line-height:20px;font-size:8.5px;color:#222;white-space:pre;transform-origin:0 0;transform:scaleX(0.955);-webkit-text-stroke:0.2px #222;">170.8 KB</div><div style="position:absolute;left:490.70px;top:230.00px;line-height:20px;font-size:8.5px;color:#222;white-space:pre;transform-origin:0 0;transform:scaleX(0.955);-webkit-text-stroke:0.2px #222;">Dec 3, 2018, 3:49 PM</div><div style="position:absolute;left:7px;top:235.25px;width:9px;height:9px;box-sizing:border-box;border:1px solid #adadad;border-radius:2px;background:#fff"></div><svg style="position:absolute;left:28.00px;top:232.45px" width="11" height="13" viewBox="0 0 11 13"><rect x="0.5" y="0.5" width="9.5" height="11" rx="1" fill="#fff" stroke="#b8c2ca" stroke-width="0.8"/><rect x="0.5" y="0.5" width="9.5" height="1.8" fill="#b8cbdb"/><path d="M0.5 4.8 H10 M0.5 7.3 H10 M0.5 9.6 H10 M3.7 2.3 V11.5 M6.9 2.3 V11.5" stroke="#dce3e8" stroke-width="0.6"/></svg><div style="position:absolute;left:43.20px;top:246.00px;line-height:20px;font-size:8.65px;color:#1f1f9c;white-space:pre;transform-origin:0 0;transform:scaleX(0.965);-webkit-text-stroke:0.2px #1f1f9c;">Late Line December 2017.csv</div><div style="position:absolute;left:433.30px;top:246.00px;line-height:20px;font-size:8.5px;color:#222;white-space:pre;transform-origin:0 0;transform:scaleX(0.955);-webkit-text-stroke:0.2px #222;">237.2 KB</div><div style="position:absolute;left:490.70px;top:246.00px;line-height:20px;font-size:8.5px;color:#222;white-space:pre;transform-origin:0 0;transform:scaleX(0.955);-webkit-text-stroke:0.2px #222;">May 16, 2018, 8:53 AM</div><div style="position:absolute;left:7px;top:251.80px;width:9px;height:9px;box-sizing:border-box;border:1px solid #adadad;border-radius:2px;background:#fff"></div><svg style="position:absolute;left:28.00px;top:249.00px" width="11" height="13" viewBox="0 0 11 13"><rect x="0.5" y="0.5" width="9.5" height="11" rx="1" fill="#fff" stroke="#b8c2ca" stroke-width="0.8"/><rect x="0.5" y="0.5" width="9.5" height="1.8" fill="#b8cbdb"/><path d="M0.5 4.8 H10 M0.5 7.3 H10 M0.5 9.6 H10 M3.7 2.3 V11.5 M6.9 2.3 V11.5" stroke="#dce3e8" stroke-width="0.6"/></svg><div style="position:absolute;left:43.20px;top:263.00px;line-height:20px;font-size:8.65px;color:#1f1f9c;white-space:pre;transform-origin:0 0;transform:scaleX(0.965);-webkit-text-stroke:0.2px #1f1f9c;">Late Line July 2018.csv</div><div style="position:absolute;left:433.30px;top:263.00px;line-height:20px;font-size:8.5px;color:#222;white-space:pre;transform-origin:0 0;transform:scaleX(0.955);-webkit-text-stroke:0.2px #222;">255.5 KB</div><div style="position:absolute;left:490.70px;top:263.00px;line-height:20px;font-size:8.5px;color:#222;white-space:pre;transform-origin:0 0;transform:scaleX(0.955);-webkit-text-stroke:0.2px #222;">Feb 27, 2019, 9:03 AM</div><div style="position:absolute;left:7px;top:268.35px;width:9px;height:9px;box-sizing:border-box;border:1px solid #adadad;border-radius:2px;background:#fff"></div><svg style="position:absolute;left:28.00px;top:265.55px" width="11" height="13" viewBox="0 0 11 13"><rect x="0.5" y="0.5" width="9.5" height="11" rx="1" fill="#fff" stroke="#b8c2ca" stroke-width="0.8"/><rect x="0.5" y="0.5" width="9.5" height="1.8" fill="#b8cbdb"/><path d="M0.5 4.8 H10 M0.5 7.3 H10 M0.5 9.6 H10 M3.7 2.3 V11.5 M6.9 2.3 V11.5" stroke="#dce3e8" stroke-width="0.6"/></svg><div style="position:absolute;left:43.20px;top:279.00px;line-height:20px;font-size:8.65px;color:#1f1f9c;white-space:pre;transform-origin:0 0;transform:scaleX(0.965);-webkit-text-stroke:0.2px #1f1f9c;">Late Line June 2018 Really Bad Days.R</div><div style="position:absolute;left:433.30px;top:279.00px;line-height:20px;font-size:8.5px;color:#222;white-space:pre;transform-origin:0 0;transform:scaleX(0.955);-webkit-text-stroke:0.2px #222;">4.3 KB</div><div style="position:absolute;left:490.70px;top:279.00px;line-height:20px;font-size:8.5px;color:#222;white-space:pre;transform-origin:0 0;transform:scaleX(0.955);-webkit-text-stroke:0.2px #222;">Oct 10, 2019, 12:07 PM</div><div style="position:absolute;left:7px;top:284.90px;width:9px;height:9px;box-sizing:border-box;border:1px solid #adadad;border-radius:2px;background:#fff"></div><svg style="position:absolute;left:27.00px;top:282.10px" width="12" height="13" viewBox="0 0 12 13"><g transform="translate(1 0)"><path d="M0.5 0.5 H6.5 L9.5 3.5 V11.5 H0.5Z" fill="#fff" stroke="#b4b9bd" stroke-width="0.8"/><path d="M6.5 0.5 V3.5 H9.5" fill="none" stroke="#b4b9bd" stroke-width="0.6"/></g><circle cx="3.2" cy="3.6" r="3" fill="#3d74b0"/><text x="3.2" y="5.4" font-family="Liberation Sans" font-size="4.8" font-weight="bold" fill="#fff" text-anchor="middle">R</text></svg><div style="position:absolute;left:43.20px;top:296.00px;line-height:20px;font-size:8.65px;color:#1f1f9c;white-space:pre;transform-origin:0 0;transform:scaleX(0.965);-webkit-text-stroke:0.2px #1f1f9c;">Late Line June 2018 Really Bad Days.txt</div><div style="position:absolute;left:433.30px;top:296.00px;line-height:20px;font-size:8.5px;color:#222;white-space:pre;transform-origin:0 0;transform:scaleX(0.955);-webkit-text-stroke:0.2px #222;">2.2 KB</div><div style="position:absolute;left:490.70px;top:296.00px;line-height:20px;font-size:8.5px;color:#222;white-space:pre;transform-origin:0 0;transform:scaleX(0.955);-webkit-text-stroke:0.2px #222;">Oct 10, 2019, 12:01 PM</div><div style="position:absolute;left:7px;top:301.45px;width:9px;height:9px;box-sizing:border-box;border:1px solid #adadad;border-radius:2px;background:#fff"></div><svg style="position:absolute;left:28.00px;top:298.65px" width="11" height="13" viewBox="0 0 11 13"><path d="M0.5 0.5 H6.5 L9.5 3.5 V11.5 H0.5Z" fill="#fff" stroke="#b4b9bd" stroke-width="0.8"/><path d="M6.5 0.5 V3.5 H9.5" fill="none" stroke="#b4b9bd" stroke-width="0.6"/></svg><div style="position:absolute;left:43.20px;top:313.00px;line-height:20px;font-size:8.65px;color:#1f1f9c;white-space:pre;transform-origin:0 0;transform:scaleX(0.965);-webkit-text-stroke:0.2px #1f1f9c;">Late Line June 2018.csv</div><div style="position:absolute;left:433.30px;top:313.00px;line-height:20px;font-size:8.5px;color:#222;white-space:pre;transform-origin:0 0;transform:scaleX(0.955);-webkit-text-stroke:0.2px #222;">163.1 KB</div><div style="position:absolute;left:490.70px;top:313.00px;line-height:20px;font-size:8.5px;color:#222;white-space:pre;transform-origin:0 0;transform:scaleX(0.955);-webkit-text-stroke:0.2px #222;">Oct 10, 2018, 4:30 PM</div><div style="position:absolute;left:7px;top:318.00px;width:9px;height:9px;box-sizing:border-box;border:1px solid #adadad;border-radius:2px;background:#fff"></div><svg style="position:absolute;left:28.00px;top:315.20px" width="11" height="13" viewBox="0 0 11 13"><rect x="0.5" y="0.5" width="9.5" height="11" rx="1" fill="#fff" stroke="#b8c2ca" stroke-width="0.8"/><rect x="0.5" y="0.5" width="9.5" height="1.8" fill="#b8cbdb"/><path d="M0.5 4.8 H10 M0.5 7.3 H10 M0.5 9.6 H10 M3.7 2.3 V11.5 M6.9 2.3 V11.5" stroke="#dce3e8" stroke-width="0.6"/></svg><div style="position:absolute;left:43.20px;top:329.00px;line-height:20px;font-size:8.65px;color:#1f1f9c;white-space:pre;transform-origin:0 0;transform:scaleX(0.965);-webkit-text-stroke:0.2px #1f1f9c;">Late Line June 2018.R</div><div style="position:absolute;left:433.30px;top:329.00px;line-height:20px;font-size:8.5px;color:#222;white-space:pre;transform-origin:0 0;transform:scaleX(0.955);-webkit-text-stroke:0.2px #222;">12.4 KB</div><div style="position:absolute;left:490.70px;top:329.00px;line-height:20px;font-size:8.5px;color:#222;white-space:pre;transform-origin:0 0;transform:scaleX(0.955);-webkit-text-stroke:0.2px #222;">Oct 8, 2018, 2:29 PM</div><div style="position:absolute;left:7px;top:334.55px;width:9px;height:9px;box-sizing:border-box;border:1px solid #adadad;border-radius:2px;background:#fff"></div><svg style="position:absolute;left:27.00px;top:331.75px" width="12" height="13" viewBox="0 0 12 13"><g transform="translate(1 0)"><path d="M0.5 0.5 H6.5 L9.5 3.5 V11.5 H0.5Z" fill="#fff" stroke="#b4b9bd" stroke-width="0.8"/><path d="M6.5 0.5 V3.5 H9.5" fill="none" stroke="#b4b9bd" stroke-width="0.6"/></g><circle cx="3.2" cy="3.6" r="3" fill="#3d74b0"/><text x="3.2" y="5.4" font-family="Liberation Sans" font-size="4.8" font-weight="bold" fill="#fff" text-anchor="middle">R</text></svg><div style="position:absolute;left:43.20px;top:346.00px;line-height:20px;font-size:8.65px;color:#1f1f9c;white-space:pre;transform-origin:0 0;transform:scaleX(0.965);-webkit-text-stroke:0.2px #1f1f9c;">Late Line June 2019 compared to 2018.Rmd</div><div style="position:absolute;left:433.30px;top:346.00px;line-height:20px;font-size:8.5px;color:#222;white-space:pre;transform-origin:0 0;transform:scaleX(0.955);-webkit-text-stroke:0.2px #222;">2.1 KB</div><div style="position:absolute;left:490.70px;top:346.00px;line-height:20px;font-size:8.5px;color:#222;white-space:pre;transform-origin:0 0;transform:scaleX(0.955);-webkit-text-stroke:0.2px #222;">Sep 12, 2019, 9:27 AM</div><div style="position:absolute;left:7px;top:351.10px;width:9px;height:9px;box-sizing:border-box;border:1px solid #adadad;border-radius:2px;background:#fff"></div><svg style="position:absolute;left:27.00px;top:348.30px" width="12" height="13" viewBox="0 0 12 13"><g transform="translate(1 0)"><path d="M0.5 0.5 H6.5 L9.5 3.5 V11.5 H0.5Z" fill="#fff" stroke="#b4b9bd" stroke-width="0.8"/><path d="M6.5 0.5 V3.5 H9.5" fill="none" stroke="#b4b9bd" stroke-width="0.6"/></g><circle cx="3.2" cy="3.6" r="3.1" fill="#c2253c"/><path d="M1 3.6 H5.4" stroke="#fff" stroke-width="1.1"/></svg><div style="position:absolute;left:43.20px;top:362.00px;line-height:20px;font-size:8.65px;color:#1f1f9c;white-space:pre;transform-origin:0 0;transform:scaleX(0.965);-webkit-text-stroke:0.2px #1f1f9c;">Late Line June 2019 Really Bad Days.Rmd</div><div style="position:absolute;left:433.30px;top:362.00px;line-height:20px;font-size:8.5px;color:#222;white-space:pre;transform-origin:0 0;transform:scaleX(0.955);-webkit-text-stroke:0.2px #222;">1.8 KB</div><div style="position:absolute;left:490.70px;top:362.00px;line-height:20px;font-size:8.5px;color:#222;white-space:pre;transform-origin:0 0;transform:scaleX(0.955);-webkit-text-stroke:0.2px #222;">Aug 19, 2019, 6:57 PM</div><div style="position:absolute;left:7px;top:367.65px;width:9px;height:9px;box-sizing:border-box;border:1px solid #adadad;border-radius:2px;background:#fff"></div><svg style="position:absolute;left:27.00px;top:364.85px" width="12" height="13" viewBox="0 0 12 13"><g transform="translate(1 0)"><path d="M0.5 0.5 H6.5 L9.5 3.5 V11.5 H0.5Z" fill="#fff" stroke="#b4b9bd" stroke-width="0.8"/><path d="M6.5 0.5 V3.5 H9.5" fill="none" stroke="#b4b9bd" stroke-width="0.6"/></g><circle cx="3.2" cy="3.6" r="3.1" fill="#c2253c"/><path d="M1 3.6 H5.4" stroke="#fff" stroke-width="1.1"/></svg><div style="position:absolute;left:43.20px;top:379.00px;line-height:20px;font-size:8.65px;color:#1f1f9c;white-space:pre;transform-origin:0 0;transform:scaleX(0.965);-webkit-text-stroke:0.2px #1f1f9c;">Late Line June 2019.csv</div><div style="position:absolute;left:433.30px;top:379.00px;line-height:20px;font-size:8.5px;color:#222;white-space:pre;transform-origin:0 0;transform:scaleX(0.955);-webkit-text-stroke:0.2px #222;">156.6 KB</div><div style="position:absolute;left:490.70px;top:379.00px;line-height:20px;font-size:8.5px;color:#222;white-space:pre;transform-origin:0 0;transform:scaleX(0.955);-webkit-text-stroke:0.2px #222;">Sep 11, 2019, 3:47 PM</div><div style="position:absolute;left:7px;top:384.20px;width:9px;height:9px;box-sizing:border-box;border:1px solid #adadad;border-radius:2px;background:#fff"></div><svg style="position:absolute;left:28.00px;top:381.40px" width="11" height="13" viewBox="0 0 11 13"><rect x="0.5" y="0.5" width="9.5" height="11" rx="1" fill="#fff" stroke="#b8c2ca" stroke-width="0.8"/><rect x="0.5" y="0.5" width="9.5" height="1.8" fill="#b8cbdb"/><path d="M0.5 4.8 H10 M0.5 7.3 H10 M0.5 9.6 H10 M3.7 2.3 V11.5 M6.9 2.3 V11.5" stroke="#dce3e8" stroke-width="0.6"/></svg></div>
</body></html>
